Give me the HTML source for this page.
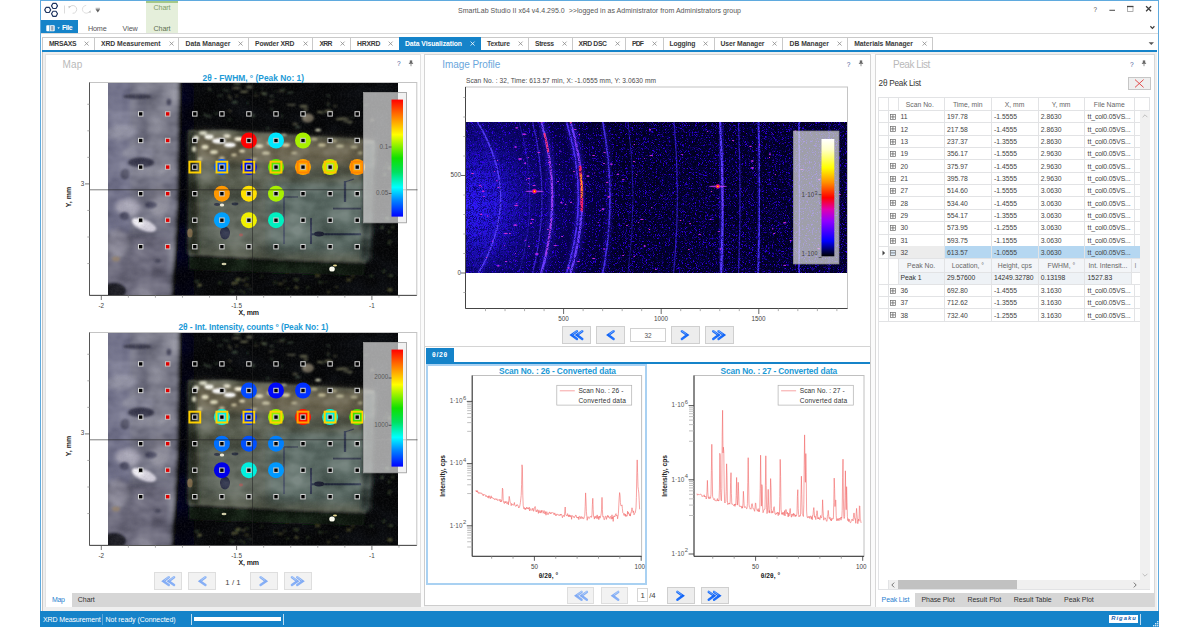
<!DOCTYPE html>
<html lang="en"><head><meta charset="utf-8"><title>SmartLab Studio II - Data Visualization</title>
<style>
html,body{margin:0;padding:0;background:#fff;}
body{width:1200px;height:627px;position:relative;overflow:hidden;font-family:"Liberation Sans",sans-serif;}
body div,body svg,.t{position:absolute;}
.t{white-space:pre;line-height:1;}
svg{overflow:visible;}
</style></head>
<body>
<svg width="0" height="0" style="left:0;top:0"><defs>
<linearGradient id="gb" gradientUnits="userSpaceOnUse" x1="0" y1="2" x2="0" y2="15"><stop offset="0" stop-color="#3a86ff"/><stop offset="0.5" stop-color="#0f62f5"/><stop offset="1" stop-color="#2c7bff"/></linearGradient>
<linearGradient id="jet" x1="0" y1="0" x2="0" y2="1">
<stop offset="0" stop-color="#ff0000"/><stop offset="0.12" stop-color="#ff6a00"/><stop offset="0.3" stop-color="#ffff00"/><stop offset="0.5" stop-color="#10e000"/><stop offset="0.62" stop-color="#00e060"/><stop offset="0.75" stop-color="#00ffff"/><stop offset="0.85" stop-color="#0090ff"/><stop offset="1" stop-color="#0000ff"/></linearGradient>
<linearGradient id="hot" x1="0" y1="0" x2="0" y2="1">
<stop offset="0" stop-color="#ffffff"/><stop offset="0.09" stop-color="#ffffc8"/><stop offset="0.245" stop-color="#ffff00"/><stop offset="0.37" stop-color="#ff9000"/><stop offset="0.5" stop-color="#ff0000"/><stop offset="0.6" stop-color="#e000b0"/><stop offset="0.7" stop-color="#9000ff"/><stop offset="0.87" stop-color="#0000ff"/><stop offset="0.95" stop-color="#000060"/><stop offset="1" stop-color="#000000"/></linearGradient>
<filter id="b1" x="-20%" y="-20%" width="140%" height="140%"><feGaussianBlur stdDeviation="1"/></filter>
<filter id="b2" x="-20%" y="-20%" width="140%" height="140%"><feGaussianBlur stdDeviation="2.2"/></filter>
<filter id="b4" x="-30%" y="-30%" width="160%" height="160%"><feGaussianBlur stdDeviation="4"/></filter>
<filter id="b05" x="-20%" y="-20%" width="140%" height="140%"><feGaussianBlur stdDeviation="0.6"/></filter>
<filter id="grain" x="0" y="0" width="100%" height="100%" color-interpolation-filters="sRGB"><feTurbulence type="fractalNoise" baseFrequency="0.55" numOctaves="2" seed="4"/><feColorMatrix values="0 0 0 0 0.5  0 0 0 0 0.5  0 0 0 0 0.5  1.2 0 0 0 -0.45"/></filter>
<filter id="mottle" x="0" y="0" width="100%" height="100%" color-interpolation-filters="sRGB"><feTurbulence type="fractalNoise" baseFrequency="0.035 0.05" numOctaves="3" seed="17"/><feColorMatrix values="1.5 0 0 0 -0.25  1.5 0 0 0 -0.25  1.5 0 0 0 -0.25  0 0 0 0 1"/></filter>
<filter id="grainw" x="0" y="0" width="100%" height="100%"><feTurbulence type="fractalNoise" baseFrequency="0.5" numOctaves="2" seed="9"/><feColorMatrix values="0 0 0 0 1  0 0 0 0 1  0 0 0 0 1  0.9 0 0 0 -0.42"/></filter>
<filter id="bnoise" x="0" y="0" width="100%" height="100%"><feTurbulence type="fractalNoise" baseFrequency="1.7" numOctaves="1" seed="11"/><feColorMatrix values="0 0 0 0 0.04  0 0 0 0 0  0 0 0 0 1  0 7 0 0 -3.82"/></filter>
<filter id="knoise" x="0" y="0" width="100%" height="100%"><feTurbulence type="fractalNoise" baseFrequency="1.9" numOctaves="1" seed="23"/><feColorMatrix values="0 0 0 0 0  0 0 0 0 0  0 0 0 0 0.08  7 0 0 0 -3.6"/></filter>

<clipPath id="pc"><rect x="0" y="0" width="290" height="212"/></clipPath>
<g id="photo" clip-path="url(#pc)">
<rect x="0" y="0" width="290" height="212" fill="#050608"/>
<g filter="url(#b2)">
<path d="M-8 -8 L71.5 -8 L70.5 110 L63.5 220 L-8 220 Z" fill="#787889"/>
<rect x="-8" y="-8" width="30" height="228" fill="#71718a"/>
<rect x="40" y="-8" width="30" height="100" fill="#80808f"/>
<rect x="-8" y="150" width="71" height="70" fill="#6c6b7c"/>
<ellipse cx="14" cy="50" rx="16" ry="7" fill="#9090a2"/>
<ellipse cx="30" cy="70" rx="16" ry="6" fill="#8a8a9c"/>
<ellipse cx="20" cy="124" rx="12" ry="8" fill="#9c9aac"/>
<ellipse cx="10" cy="160" rx="10" ry="14" fill="#8a8898"/>
<ellipse cx="52" cy="118" rx="10" ry="16" fill="#8b8a98"/>
</g>
<g filter="url(#b1)">
<ellipse cx="36" cy="142" rx="13" ry="5.5" fill="#d6d3de" transform="rotate(22 36 142)"/>
<ellipse cx="30" cy="139" rx="6" ry="3.4" fill="#f2f0f6" transform="rotate(22 30 139)"/>
<ellipse cx="29" cy="13.5" rx="14" ry="2.6" fill="#3c3c50"/>
<ellipse cx="33" cy="79.5" rx="13" ry="5" fill="#353548"/>
<ellipse cx="17" cy="91" rx="4.5" ry="5.5" fill="#47475c"/>
<ellipse cx="61" cy="19" rx="2.2" ry="3.6" fill="#45455a"/>
<ellipse cx="16.5" cy="133" rx="5" ry="4" fill="#484860"/>
<ellipse cx="43" cy="122" rx="6" ry="3.4" fill="#4c4c62"/>
<ellipse cx="6" cy="208" rx="12" ry="8" fill="#20202c"/>
<ellipse cx="50" cy="178" rx="3" ry="2" fill="#505064"/>
<ellipse cx="8" cy="176" rx="4" ry="2.4" fill="#8a7868"/>
</g>
<path d="M73.5 -6 L86 -6 L86 218 L66 218 L72.5 110 Z" fill="#040507" filter="url(#b1)"/>
<g filter="url(#b1)">
<path d="M81 48 L120 47 L160 50 L204 53 L254 56 L266 58 L263 120 L261 160 L258 180 L200 178 L140 175 L81 172 Z" fill="#585d50"/>
<path d="M81 173.5 L258 181 L256 193 L81 187 Z" fill="#11130e"/>
</g>
<g filter="url(#b4)">
<path d="M84 50 L262 58 L262 84 L86 78 Z" fill="#68624e"/>
<path d="M160 100 L262 100 L258 172 L160 170 Z" fill="#5b6c66"/>
<path d="M92 112 L160 112 L160 168 L92 165 Z" fill="#5f665b"/>
</g>
<g filter="url(#b2)">
<path d="M80 48 L88 48 L90 172 L80 171 Z" fill="#23251f"/>
<path d="M256 60 L267 60 L262 178 L253 178 Z" fill="#2a3430"/>
</g>
<g filter="url(#b1)">
<ellipse cx="88" cy="55" rx="3" ry="2.6" fill="#e8e8d8"/>
<ellipse cx="95" cy="50" rx="4" ry="2" fill="#d8d8c4"/>
<ellipse cx="101" cy="54" rx="4.5" ry="2.4" fill="#fafaf0"/>
<ellipse cx="111" cy="58" rx="7" ry="2.8" fill="#ffffff"/>
<ellipse cx="122" cy="62" rx="6" ry="2.4" fill="#ffffff"/>
<ellipse cx="131" cy="56" rx="4.5" ry="2.2" fill="#fbf6e2"/>
<ellipse cx="119" cy="53" rx="3.5" ry="1.8" fill="#f0ecd4"/>
<ellipse cx="141" cy="60" rx="5" ry="2.2" fill="#efe8c8"/>
<ellipse cx="97" cy="64" rx="3.5" ry="2.2" fill="#e4e0c4"/>
<ellipse cx="151" cy="63" rx="4" ry="1.8" fill="#e0d8b0"/>
<ellipse cx="164" cy="60" rx="5" ry="2" fill="#d8d2ac"/>
<ellipse cx="178" cy="62" rx="4" ry="1.8" fill="#dcd4a8"/>
<ellipse cx="194" cy="60" rx="5" ry="1.8" fill="#c8c2a0"/>
<ellipse cx="214" cy="62" rx="4" ry="1.8" fill="#c4be9a"/>
<ellipse cx="232" cy="63" rx="4" ry="1.6" fill="#bab694"/>
<ellipse cx="246" cy="64" rx="3.5" ry="1.6" fill="#b0ac8c"/>
<ellipse cx="106" cy="69" rx="4" ry="2" fill="#e0dcc0"/>
<ellipse cx="134" cy="68" rx="3" ry="1.6" fill="#ece4c4"/>
<ellipse cx="86" cy="66" rx="2.2" ry="3" fill="#c8c8b0"/>
<ellipse cx="158" cy="70" rx="4" ry="1.6" fill="#c8c2a0"/>
<ellipse cx="172" cy="56" rx="3" ry="1.4" fill="#c8c098"/>
<ellipse cx="206" cy="56" rx="3.5" ry="1.5" fill="#b8b290"/>
<ellipse cx="226" cy="58" rx="3" ry="1.4" fill="#b0aa8a"/>
<ellipse cx="114" cy="75" rx="3" ry="1.6" fill="#cfc8a8"/>
<ellipse cx="92" cy="76" rx="2.5" ry="1.8" fill="#c0bca0"/>
<ellipse cx="126" cy="72" rx="3" ry="1.4" fill="#d8d0b0"/>
<ellipse cx="146" cy="76" rx="3" ry="1.3" fill="#b8b294"/>
<ellipse cx="186" cy="70" rx="3" ry="1.3" fill="#b4ae8c"/>
<ellipse cx="252" cy="70" rx="2.5" ry="1.4" fill="#a8a484"/>
<ellipse cx="147.0" cy="9.5" rx="1.2" ry="1.1" fill="#2c3a2c"/>
<ellipse cx="154.4" cy="5.5" rx="1.5" ry="0.8" fill="#2c342c"/>
<ellipse cx="163.6" cy="13.3" rx="1.9" ry="1.4" fill="#2c342c"/>
<ellipse cx="111.8" cy="12.6" rx="3.1" ry="1.2" fill="#2c342c"/>
<ellipse cx="159.8" cy="45.0" rx="2.2" ry="0.8" fill="#2c3a2c"/>
<ellipse cx="163.8" cy="26.2" rx="1.7" ry="1.4" fill="#2c342c"/>
<ellipse cx="121.8" cy="28.0" rx="1.8" ry="1.1" fill="#3a3a2c"/>
<ellipse cx="101.1" cy="5.6" rx="2.1" ry="1.1" fill="#3a3a2c"/>
<ellipse cx="226.8" cy="23.0" rx="1.8" ry="0.9" fill="#4a4a3a"/>
<ellipse cx="121.6" cy="36.5" rx="2.3" ry="1.1" fill="#2c3a2c"/>
<ellipse cx="244.0" cy="34.4" rx="2.3" ry="0.8" fill="#263228"/>
<ellipse cx="180.1" cy="10.1" rx="1.3" ry="1.1" fill="#263228"/>
<ellipse cx="96.9" cy="31.7" rx="2.3" ry="1.4" fill="#2c342c"/>
<ellipse cx="145.2" cy="32.9" rx="2.1" ry="1.3" fill="#2c342c"/>
<ellipse cx="102.1" cy="7.0" rx="2.0" ry="1.2" fill="#263228"/>
<ellipse cx="100.7" cy="33.2" rx="3.2" ry="1.4" fill="#2c342c"/>
<ellipse cx="140.1" cy="19.6" rx="1.0" ry="1.1" fill="#263228"/>
<ellipse cx="119.6" cy="8.0" rx="1.5" ry="0.9" fill="#2c3a2c"/>
<ellipse cx="220.0" cy="20.1" rx="1.2" ry="1.1" fill="#4a4a3a"/>
<ellipse cx="186.7" cy="41.0" rx="2.9" ry="0.9" fill="#4a4a3a"/>
<ellipse cx="163.1" cy="18.4" rx="3.1" ry="0.8" fill="#4a4a3a"/>
<ellipse cx="121.0" cy="13.0" rx="1.0" ry="1.4" fill="#3a3a2c"/>
<ellipse cx="122.1" cy="15.1" rx="1.9" ry="1.0" fill="#3a3a2c"/>
<ellipse cx="189.7" cy="44.0" rx="3.1" ry="1.2" fill="#2c342c"/>
<ellipse cx="220.2" cy="22.6" rx="1.9" ry="1.0" fill="#2c342c"/>
<ellipse cx="108.2" cy="30.3" rx="1.4" ry="1.5" fill="#2c3a2c"/>
<ellipse cx="167.6" cy="7.7" rx="1.1" ry="0.7" fill="#2c342c"/>
<ellipse cx="116.6" cy="7.4" rx="2.4" ry="0.8" fill="#263228"/>
<ellipse cx="126.6" cy="19.2" rx="3.1" ry="1.2" fill="#263228"/>
<ellipse cx="173.5" cy="8.0" rx="3.2" ry="1.1" fill="#4a4a3a"/>
<ellipse cx="175.2" cy="6.7" rx="2.6" ry="1.3" fill="#2c3a2c"/>
<ellipse cx="174.2" cy="32.8" rx="1.1" ry="1.5" fill="#2c342c"/>
<ellipse cx="183.0" cy="9.3" rx="3.0" ry="1.3" fill="#2c342c"/>
<ellipse cx="142.5" cy="30.6" rx="2.5" ry="0.9" fill="#2c3a2c"/>
<ellipse cx="154.5" cy="10.2" rx="2.2" ry="1.3" fill="#3a3a2c"/>
<ellipse cx="148.0" cy="12.6" rx="2.8" ry="1.4" fill="#3a3a2c"/>
<ellipse cx="220.2" cy="12.7" rx="2.1" ry="1.3" fill="#2c342c"/>
<ellipse cx="264.2" cy="37.0" rx="1.6" ry="1.3" fill="#4a4a3a"/>
<ellipse cx="258.3" cy="22.2" rx="3.1" ry="1.0" fill="#263228"/>
<ellipse cx="128.8" cy="12.8" rx="1.7" ry="1.1" fill="#3a3a2c"/>
<ellipse cx="242.3" cy="38.9" rx="2.0" ry="1.5" fill="#4a5240"/>
<ellipse cx="220.4" cy="27.9" rx="4.0" ry="1.5" fill="#66664e"/>
<ellipse cx="214.5" cy="29.3" rx="2.5" ry="1.4" fill="#4a5240"/>
<ellipse cx="136.2" cy="8.7" rx="4.2" ry="1.2" fill="#66664e"/>
<ellipse cx="237.7" cy="38.4" rx="2.5" ry="0.9" fill="#5a5a48"/>
<ellipse cx="195.7" cy="23.3" rx="4.0" ry="1.3" fill="#66664e"/>
<ellipse cx="241.7" cy="39.1" rx="3.1" ry="1.2" fill="#5a5a48"/>
<ellipse cx="128.5" cy="5.2" rx="4.2" ry="0.9" fill="#66664e"/>
<ellipse cx="236.2" cy="35.6" rx="4.6" ry="1.5" fill="#5a5a48"/>
<ellipse cx="129.3" cy="0.7" rx="3.5" ry="1.4" fill="#4a5240"/>
<ellipse cx="156.6" cy="10.8" rx="2.4" ry="1.5" fill="#4a5240"/>
<ellipse cx="231.9" cy="36.1" rx="4.4" ry="1.2" fill="#66664e"/>
<ellipse cx="141.4" cy="4.0" rx="3.5" ry="1.5" fill="#5a5a48"/>
<ellipse cx="197.8" cy="26.5" rx="2.4" ry="0.9" fill="#66664e"/>
<ellipse cx="211.6" cy="29.0" rx="3.0" ry="1.2" fill="#66664e"/>
<ellipse cx="182.9" cy="21.9" rx="4.6" ry="0.8" fill="#5a5a48"/>
<ellipse cx="200" cy="35" rx="6" ry="4.5" fill="#777060"/>
<ellipse cx="210" cy="47" rx="3" ry="1.6" fill="#d8d8c0"/>
<ellipse cx="176" cy="52" rx="3" ry="1.3" fill="#b8b8a0"/>
<ellipse cx="142.3" cy="205.9" rx="1.9" ry="0.6" fill="#283020"/>
<ellipse cx="263.2" cy="193.1" rx="2.2" ry="1.0" fill="#2a3824"/>
<ellipse cx="188.4" cy="204.5" rx="2.0" ry="1.2" fill="#5a5a34"/>
<ellipse cx="187.5" cy="196.5" rx="2.8" ry="1.4" fill="#283020"/>
<ellipse cx="138.9" cy="202.1" rx="2.7" ry="0.7" fill="#444424"/>
<ellipse cx="111.8" cy="200.0" rx="2.3" ry="0.9" fill="#344428"/>
<ellipse cx="129.7" cy="197.5" rx="2.8" ry="0.7" fill="#344428"/>
<ellipse cx="228.4" cy="203.9" rx="1.5" ry="0.7" fill="#444424"/>
<ellipse cx="179.7" cy="205.4" rx="1.8" ry="1.0" fill="#344428"/>
<ellipse cx="282.0" cy="207.0" rx="2.4" ry="1.4" fill="#444424"/>
<ellipse cx="167.1" cy="199.6" rx="1.6" ry="1.2" fill="#2a3824"/>
<ellipse cx="91.8" cy="202.0" rx="2.4" ry="0.9" fill="#5a5a34"/>
<ellipse cx="189.4" cy="197.3" rx="1.2" ry="1.3" fill="#344428"/>
<ellipse cx="132.8" cy="207.8" rx="1.5" ry="0.6" fill="#344428"/>
<ellipse cx="240.7" cy="196.9" rx="2.6" ry="1.3" fill="#444424"/>
<ellipse cx="220.5" cy="209.0" rx="1.3" ry="1.3" fill="#5a5a34"/>
<ellipse cx="199.8" cy="204.6" rx="1.6" ry="1.2" fill="#344428"/>
<ellipse cx="123.9" cy="208.1" rx="2.9" ry="1.1" fill="#2a3824"/>
<ellipse cx="245.1" cy="193.5" rx="1.1" ry="1.3" fill="#444424"/>
<ellipse cx="176.9" cy="198.1" rx="1.8" ry="1.3" fill="#283020"/>
<ellipse cx="209.9" cy="192.8" rx="2.9" ry="1.4" fill="#444424"/>
<ellipse cx="139.3" cy="195.3" rx="2.3" ry="1.0" fill="#2a3824"/>
<ellipse cx="128.4" cy="200.0" rx="1.5" ry="1.2" fill="#444424"/>
<ellipse cx="282.9" cy="192.7" rx="2.5" ry="1.0" fill="#344428"/>
<ellipse cx="125.1" cy="200.5" rx="1.2" ry="1.3" fill="#5a5a34"/>
<ellipse cx="172.7" cy="200.9" rx="2.9" ry="0.8" fill="#5a5a34"/>
<ellipse cx="130.2" cy="196.1" rx="2.7" ry="1.2" fill="#444424"/>
<ellipse cx="212.7" cy="199.3" rx="3.0" ry="1.3" fill="#2a3824"/>
<ellipse cx="90.8" cy="203.3" rx="1.9" ry="0.6" fill="#2a3824"/>
<ellipse cx="218.4" cy="198.9" rx="2.3" ry="0.8" fill="#283020"/>
<ellipse cx="135.5" cy="197.3" rx="1.4" ry="0.8" fill="#5a5a34"/>
<ellipse cx="88.7" cy="198.6" rx="2.9" ry="1.0" fill="#2a3824"/>
<ellipse cx="135.9" cy="209.4" rx="1.4" ry="0.7" fill="#2a3824"/>
<ellipse cx="153.7" cy="193.5" rx="2.0" ry="0.8" fill="#2a3824"/>
<ellipse cx="279.1" cy="80.5" rx="1.1" ry="0.9" fill="#2a3424"/>
<ellipse cx="277.2" cy="84.6" rx="0.8" ry="1.2" fill="#2a3424"/>
<ellipse cx="274.2" cy="144.4" rx="1.4" ry="1.7" fill="#2a3424"/>
<ellipse cx="281.8" cy="158.8" rx="1.9" ry="1.3" fill="#2a3424"/>
<ellipse cx="275.9" cy="188.3" rx="1.0" ry="1.7" fill="#2a3424"/>
<ellipse cx="281.6" cy="84.8" rx="1.8" ry="1.9" fill="#2a3424"/>
<ellipse cx="281.3" cy="160.7" rx="1.8" ry="1.0" fill="#2a3424"/>
<ellipse cx="279.4" cy="135.5" rx="1.8" ry="1.8" fill="#2a3424"/>
<ellipse cx="284.9" cy="144.2" rx="1.9" ry="1.6" fill="#2a3424"/>
<ellipse cx="282.5" cy="105.3" rx="0.8" ry="1.0" fill="#2a3424"/>
<ellipse cx="276.5" cy="91.5" rx="1.8" ry="1.5" fill="#2a3424"/>
<ellipse cx="281.3" cy="148.9" rx="1.6" ry="1.4" fill="#2a3424"/>
</g>
<g filter="url(#b05)">
<ellipse cx="224" cy="186" rx="2.8" ry="2.6" fill="#fffff2"/>
<ellipse cx="227" cy="182.6" rx="2" ry="1" fill="#e8d890"/>
<ellipse cx="114" cy="122" rx="2.2" ry="1.6" fill="#f0ecd8"/>
<ellipse cx="116" cy="181" rx="2.5" ry="1.3" fill="#d8d4b0"/>
<ellipse cx="82" cy="150" rx="2.6" ry="4.5" fill="#6a5638"/>
<path d="M176 114 v47" stroke="#39405a" stroke-width="1.4" fill="none"/>
<path d="M176 114 h14" stroke="#353a4c" stroke-width="1.2" fill="none"/>
<path d="M203 135 v26" stroke="#333a52" stroke-width="1.9" fill="none"/>
<path d="M203 151.2 h50" stroke="#2a3046" stroke-width="1.9" fill="none"/>
<ellipse cx="211" cy="151" rx="5" ry="2.4" fill="#20263a"/>
<path d="M225 125.6 h28" stroke="#30374a" stroke-width="1.8" fill="none"/>
<path d="M237 98 v21" stroke="#2c3246" stroke-width="2.3" fill="none"/>
<path d="M237 99 l9 -3" stroke="#2c3246" stroke-width="1.2" fill="none"/>
<ellipse cx="117" cy="150" rx="5" ry="6.5" fill="#22253a"/>
<ellipse cx="109" cy="121.5" rx="3" ry="1.4" fill="#2c3040"/>
<ellipse cx="127" cy="121" rx="3.4" ry="1.4" fill="#2c3040"/>
<ellipse cx="133" cy="152" rx="2" ry="1.4" fill="#b84040" opacity="0.6"/>
</g>
<rect x="0" y="0" width="290" height="212" filter="url(#mottle)" opacity="0.5" style="mix-blend-mode:soft-light"/>
<rect x="0" y="0" width="290" height="212" filter="url(#grain)" opacity="0.2"/>
</g>
</defs></svg>
<div class="window-chrome" style="left:0;top:0">
<div style="left:40px;top:0px;width:1119px;height:627px;box-sizing:border-box;border-left:1px solid #5faade;border-right:1px solid #5faade;border-top:1px solid #5faade;"></div>
<svg style="left:41px;top:1px" width="64" height="19" viewBox="0 0 64 19"><g fill="none" stroke="#1f3560" stroke-width="1.15" stroke-linejoin="round"><polygon points="9.70,8.90 8.20,11.50 5.20,11.50 3.70,8.90 5.20,6.30 8.20,6.30"/><polygon points="16.50,4.90 15.00,7.50 12.00,7.50 10.50,4.90 12.00,2.30 15.00,2.30"/><polygon points="16.50,12.80 15.00,15.40 12.00,15.40 10.50,12.80 12.00,10.20 15.00,10.20"/></g><path d="M23.5 4.5V12.5" stroke="#dcdcdc" stroke-width="1" fill="none"/><path d="M28.6 6.2 A3.9 3.9 0 1 1 31.6 12.3" stroke="#cfcfcf" stroke-width="0.8" fill="none"/><path d="M27.4 4.9l2.6 0.4l-2.2 2.2z" fill="#c4c4c4"/><path d="M45.2 4.4 A3.9 3.9 0 1 0 48.6 10.4" stroke="#d6d6d6" stroke-width="0.8" fill="none"/><path d="M49.6 9.2l0.2 2.6l-2.6 -0.4z" fill="#c4c4c4"/><path d="M54.5 8.3h4.6l-2.3 3.1z" fill="#606060"/><path d="M54.6 7.3h4.4" stroke="#8a8a8a" stroke-width="0.7"/></svg>
<div style="left:146px;top:1px;width:32px;height:32px;background:#e5efdb;"></div>
<div style="left:146px;top:1px;width:32px;height:2px;background:#a4c98a;"></div>
<span class="t" style="font-size:7.2px;color:#7f9d68;letter-spacing:-0.195px;left:153.60px;top:4.41px;">Chart</span>
<span class="t" style="font-size:7.2px;color:#5f6f52;letter-spacing:-0.195px;left:153.60px;top:24.61px;">Chart</span>
<div style="left:41px;top:20.4px;width:37px;height:12.8px;background:#1583c9;"></div>
<svg style="left:46px;top:24.9px" width="16" height="8" viewBox="0 0 16 8">
<rect x="0.3" y="0.3" width="8.4" height="5.9" rx="0.7" fill="#fff"/><path d="M3.7 0.3v5.9" stroke="#1583c9" stroke-width="0.7"/><rect x="4.9" y="1" width="2.7" height="4.5" fill="#a9b9c9"/><path d="M6.2 1v4.5" stroke="#6f8194" stroke-width="0.5"/>
<path d="M11.4 2.3h2.4l-1.2 1.6z" fill="#d6eaf8"/></svg>
<span class="t" style="font-size:6.9px;color:#fff;font-weight:700;letter-spacing:-0.425px;left:61.90px;top:24.86px;">File</span>
<span class="t" style="font-size:7.2px;color:#555;letter-spacing:-0.163px;left:88.00px;top:24.61px;">Home</span>
<span class="t" style="font-size:7.2px;color:#555;letter-spacing:-0.084px;left:122.60px;top:24.61px;">View</span>
<span class="t" style="font-size:7px;color:#555;letter-spacing:0.028px;left:458.00px;top:7.07px;">SmartLab Studio II x64 v4.4.295.0  &gt;&gt;logged in as Administrator from Administrators group</span>
<svg style="left:1088px;top:2px" width="70" height="46" viewBox="0 0 70 46">
<path d="M21.4 8.3h5.6" stroke="#555" stroke-width="1.1"/>
<rect x="39.4" y="4.6" width="5.6" height="5" fill="none" stroke="#8c8c8c" stroke-width="0.7"/><path d="M39 4.5h6.4" stroke="#444" stroke-width="1.3"/>
<path d="M58.1 4.3l5 5M63.1 4.3l-5 5" stroke="#3c3c3c" stroke-width="1.25"/>
<path d="M62.4 24.3l2 2.1l2-2.1" stroke="#3c3c3c" stroke-width="1.25" fill="none"/>
<path d="M60.6 40.2h5.4l-2.7 2.9z" fill="#555"/>
</svg>
<span class="t" style="font-size:6.3px;color:#505050;left:1093.60px;top:6.67px;">?</span>
<div style="left:41px;top:33px;width:1117px;height:1px;background:#dadada;"></div>
<div style="left:42px;top:37px;width:1px;height:13px;background:#c9c9c9;"></div>
<div style="left:42px;top:37px;width:891px;height:1px;background:#c9c9c9;"></div>
<span class="t" style="font-size:6.8px;color:#3a3a3a;font-weight:700;letter-spacing:-0.319px;left:49.00px;top:40.84px;">MRSAXS</span>
<svg style="left:84.4px;top:41.4px" width="5.2" height="5.2" viewBox="0 0 5.2 5.2"><path d="M0.6 0.6l4 4M4.6 0.6l-4 4" stroke="#8a8a8a" stroke-width="0.8"/></svg>
<div style="left:94px;top:37px;width:1px;height:13px;background:#c9c9c9;"></div>
<span class="t" style="font-size:6.8px;color:#3a3a3a;font-weight:700;letter-spacing:-0.040px;left:101.00px;top:40.84px;">XRD Measurement</span>
<svg style="left:168.9px;top:41.4px" width="5.2" height="5.2" viewBox="0 0 5.2 5.2"><path d="M0.6 0.6l4 4M4.6 0.6l-4 4" stroke="#8a8a8a" stroke-width="0.8"/></svg>
<div style="left:178px;top:37px;width:1px;height:13px;background:#c9c9c9;"></div>
<span class="t" style="font-size:6.8px;color:#3a3a3a;font-weight:700;letter-spacing:0.038px;left:185.50px;top:40.84px;">Data Manager</span>
<svg style="left:238.4px;top:41.4px" width="5.2" height="5.2" viewBox="0 0 5.2 5.2"><path d="M0.6 0.6l4 4M4.6 0.6l-4 4" stroke="#8a8a8a" stroke-width="0.8"/></svg>
<div style="left:248px;top:37px;width:1px;height:13px;background:#c9c9c9;"></div>
<span class="t" style="font-size:6.8px;color:#3a3a3a;font-weight:700;letter-spacing:-0.144px;left:255.00px;top:40.84px;">Powder XRD</span>
<svg style="left:302.9px;top:41.4px" width="5.2" height="5.2" viewBox="0 0 5.2 5.2"><path d="M0.6 0.6l4 4M4.6 0.6l-4 4" stroke="#8a8a8a" stroke-width="0.8"/></svg>
<div style="left:312px;top:37px;width:1px;height:13px;background:#c9c9c9;"></div>
<span class="t" style="font-size:6.8px;color:#3a3a3a;font-weight:700;letter-spacing:-0.680px;left:319.50px;top:40.84px;">XRR</span>
<svg style="left:340.4px;top:41.4px" width="5.2" height="5.2" viewBox="0 0 5.2 5.2"><path d="M0.6 0.6l4 4M4.6 0.6l-4 4" stroke="#8a8a8a" stroke-width="0.8"/></svg>
<div style="left:350px;top:37px;width:1px;height:13px;background:#c9c9c9;"></div>
<span class="t" style="font-size:6.8px;color:#3a3a3a;font-weight:700;letter-spacing:-0.168px;left:357.00px;top:40.84px;">HRXRD</span>
<svg style="left:388.4px;top:41.4px" width="5.2" height="5.2" viewBox="0 0 5.2 5.2"><path d="M0.6 0.6l4 4M4.6 0.6l-4 4" stroke="#8a8a8a" stroke-width="0.8"/></svg>
<div style="left:399px;top:37px;width:82px;height:14px;background:#1583c9;"></div>
<span class="t" style="font-size:6.8px;color:#fff;font-weight:700;letter-spacing:-0.062px;left:405.00px;top:40.84px;">Data Visualization</span>
<svg style="left:470.4px;top:41.4px" width="5.2" height="5.2" viewBox="0 0 5.2 5.2"><path d="M0.6 0.6l4 4M4.6 0.6l-4 4" stroke="#fff" stroke-width="0.8"/></svg>
<span class="t" style="font-size:6.8px;color:#3a3a3a;font-weight:700;letter-spacing:-0.177px;left:487.00px;top:40.84px;">Texture</span>
<svg style="left:518.4px;top:41.4px" width="5.2" height="5.2" viewBox="0 0 5.2 5.2"><path d="M0.6 0.6l4 4M4.6 0.6l-4 4" stroke="#8a8a8a" stroke-width="0.8"/></svg>
<div style="left:528px;top:37px;width:1px;height:13px;background:#c9c9c9;"></div>
<span class="t" style="font-size:6.8px;color:#3a3a3a;font-weight:700;letter-spacing:-0.359px;left:535.00px;top:40.84px;">Stress</span>
<svg style="left:561.9px;top:41.4px" width="5.2" height="5.2" viewBox="0 0 5.2 5.2"><path d="M0.6 0.6l4 4M4.6 0.6l-4 4" stroke="#8a8a8a" stroke-width="0.8"/></svg>
<div style="left:572px;top:37px;width:1px;height:13px;background:#c9c9c9;"></div>
<span class="t" style="font-size:6.8px;color:#3a3a3a;font-weight:700;letter-spacing:-0.349px;left:578.50px;top:40.84px;">XRD DSC</span>
<svg style="left:614.9px;top:41.4px" width="5.2" height="5.2" viewBox="0 0 5.2 5.2"><path d="M0.6 0.6l4 4M4.6 0.6l-4 4" stroke="#8a8a8a" stroke-width="0.8"/></svg>
<div style="left:625px;top:37px;width:1px;height:13px;background:#c9c9c9;"></div>
<span class="t" style="font-size:6.8px;color:#3a3a3a;font-weight:700;letter-spacing:-0.805px;left:632.00px;top:40.84px;">PDF</span>
<svg style="left:652.4px;top:41.4px" width="5.2" height="5.2" viewBox="0 0 5.2 5.2"><path d="M0.6 0.6l4 4M4.6 0.6l-4 4" stroke="#8a8a8a" stroke-width="0.8"/></svg>
<div style="left:663px;top:37px;width:1px;height:13px;background:#c9c9c9;"></div>
<span class="t" style="font-size:6.8px;color:#3a3a3a;font-weight:700;letter-spacing:-0.135px;left:669.50px;top:40.84px;">Logging</span>
<svg style="left:703.4px;top:41.4px" width="5.2" height="5.2" viewBox="0 0 5.2 5.2"><path d="M0.6 0.6l4 4M4.6 0.6l-4 4" stroke="#8a8a8a" stroke-width="0.8"/></svg>
<div style="left:714px;top:37px;width:1px;height:13px;background:#c9c9c9;"></div>
<span class="t" style="font-size:6.8px;color:#3a3a3a;font-weight:700;letter-spacing:-0.087px;left:720.50px;top:40.84px;">User Manager</span>
<svg style="left:772.4px;top:41.4px" width="5.2" height="5.2" viewBox="0 0 5.2 5.2"><path d="M0.6 0.6l4 4M4.6 0.6l-4 4" stroke="#8a8a8a" stroke-width="0.8"/></svg>
<div style="left:782px;top:37px;width:1px;height:13px;background:#c9c9c9;"></div>
<span class="t" style="font-size:6.8px;color:#3a3a3a;font-weight:700;letter-spacing:-0.017px;left:789.50px;top:40.84px;">DB Manager</span>
<svg style="left:836.9px;top:41.4px" width="5.2" height="5.2" viewBox="0 0 5.2 5.2"><path d="M0.6 0.6l4 4M4.6 0.6l-4 4" stroke="#8a8a8a" stroke-width="0.8"/></svg>
<div style="left:847px;top:37px;width:1px;height:13px;background:#c9c9c9;"></div>
<span class="t" style="font-size:6.8px;color:#3a3a3a;font-weight:700;letter-spacing:-0.032px;left:854.20px;top:40.84px;">Materials Manager</span>
<svg style="left:921.7px;top:41.4px" width="5.2" height="5.2" viewBox="0 0 5.2 5.2"><path d="M0.6 0.6l4 4M4.6 0.6l-4 4" stroke="#8a8a8a" stroke-width="0.8"/></svg>
<div style="left:932px;top:37px;width:1px;height:13px;background:#c9c9c9;"></div>
<div style="left:42px;top:50px;width:1115px;height:2px;background:#1583c9;"></div>
<div style="left:42px;top:52px;width:1115px;height:559px;background:#efefef;"></div>
</div>
<div class="panel panel-map" style="left:0;top:0">
<div style="left:42px;top:52px;width:1px;height:559px;background:#c4c4c4;"></div>
<div style="left:421px;top:54px;width:3px;height:553px;background:#fbfbfb;"></div>
<div style="left:45px;top:54px;width:376px;height:553px;background:#fff;border:1px solid #e2e2e2;box-sizing:border-box;border-bottom:none;"></div>
<span class="t" style="font-size:10px;color:#b9b9b9;letter-spacing:0.073px;left:62.60px;top:60.13px;">Map</span>
<span class="t" style="font-size:6.6px;color:#4a5a96;left:397.10px;top:61.31px;">?</span><svg style="left:407.9px;top:60.00000000000001px" width="6" height="7" viewBox="0 0 6 7"><path d="M1.8 0.4h2.4v2.6h-2.4z" fill="#6a6a6a"/><path d="M0.9 3.3h4.2" stroke="#555" stroke-width="0.9"/><path d="M3 3.6v2.6" stroke="#666" stroke-width="0.7"/></svg>
<svg style="left:85px;top:75px" width="340" height="250" viewBox="0 0 340 250"><rect x="4.5" y="7.50" width="327.3" height="212.50" fill="#fff" stroke="#c4c4c4" stroke-width="1"/>
<use href="#photo" x="23" y="8.00"/>
<circle cx="163.9" cy="65.5" r="8" fill="#ff0000"/>
<circle cx="191.0" cy="65.5" r="8" fill="#00e8ff"/>
<circle cx="218.0" cy="65.5" r="8" fill="#a8f000"/>
<circle cx="136.9" cy="92.1" r="8" fill="#0058ff"/>
<circle cx="163.9" cy="92.1" r="8" fill="#0010e8"/>
<circle cx="191.0" cy="92.1" r="8" fill="#58e800"/>
<circle cx="218.0" cy="92.1" r="8" fill="#ffa800"/>
<circle cx="245.1" cy="92.1" r="8" fill="#bcf000"/>
<circle cx="272.2" cy="92.1" r="8" fill="#ffa000"/>
<circle cx="136.9" cy="118.7" r="8" fill="#ff9800"/>
<circle cx="163.9" cy="118.7" r="8" fill="#ffe000"/>
<circle cx="191.0" cy="118.7" r="8" fill="#a8f000"/>
<circle cx="136.9" cy="145.2" r="8" fill="#00a0ff"/>
<circle cx="163.9" cy="145.2" r="8" fill="#f0f000"/>
<circle cx="191.0" cy="145.2" r="8" fill="#00f0c0"/>
<rect x="104.4" y="86.7" width="10.8" height="10.8" fill="none" stroke="#ffd000" stroke-width="2"/>
<rect x="131.5" y="86.7" width="10.8" height="10.8" fill="none" stroke="#ffd000" stroke-width="2"/>
<rect x="158.5" y="86.7" width="10.8" height="10.8" fill="none" stroke="#ffd000" stroke-width="2"/>
<rect x="185.6" y="86.7" width="10.8" height="10.8" fill="none" stroke="#ffc400" stroke-width="2"/>
<rect x="212.6" y="86.7" width="10.8" height="10.8" fill="none" stroke="#ff8400" stroke-width="2"/>
<rect x="239.7" y="86.7" width="10.8" height="10.8" fill="none" stroke="#ffc400" stroke-width="2"/>
<rect x="266.8" y="86.7" width="10.8" height="10.8" fill="none" stroke="#ff8400" stroke-width="2"/>
<rect x="53.5" y="36.7" width="4.4" height="4.4" fill="#000" stroke="#d4d4d4" stroke-width="1"/>
<rect x="53.5" y="63.3" width="4.4" height="4.4" fill="#000" stroke="#d4d4d4" stroke-width="1"/>
<rect x="53.5" y="89.9" width="4.4" height="4.4" fill="#000" stroke="#d4d4d4" stroke-width="1"/>
<rect x="53.5" y="116.5" width="4.4" height="4.4" fill="#000" stroke="#d4d4d4" stroke-width="1"/>
<rect x="53.5" y="143.0" width="4.4" height="4.4" fill="#000" stroke="#d4d4d4" stroke-width="1"/>
<rect x="53.5" y="169.5" width="4.4" height="4.4" fill="#000" stroke="#d4d4d4" stroke-width="1"/>
<rect x="80.5" y="36.7" width="4.4" height="4.4" fill="#e00000" stroke="#c8bcbc" stroke-width="1"/>
<rect x="80.5" y="63.3" width="4.4" height="4.4" fill="#e00000" stroke="#c8bcbc" stroke-width="1"/>
<rect x="80.5" y="89.9" width="4.4" height="4.4" fill="#e00000" stroke="#c8bcbc" stroke-width="1"/>
<rect x="80.5" y="116.5" width="4.4" height="4.4" fill="#e00000" stroke="#c8bcbc" stroke-width="1"/>
<rect x="80.5" y="143.0" width="4.4" height="4.4" fill="#e00000" stroke="#c8bcbc" stroke-width="1"/>
<rect x="80.5" y="169.5" width="4.4" height="4.4" fill="#e00000" stroke="#c8bcbc" stroke-width="1"/>
<rect x="107.6" y="36.7" width="4.4" height="4.4" fill="#000" stroke="#d4d4d4" stroke-width="1"/>
<rect x="107.6" y="63.3" width="4.4" height="4.4" fill="#000" stroke="#d4d4d4" stroke-width="1"/>
<rect x="107.6" y="89.9" width="4.4" height="4.4" fill="#000" stroke="#d4d4d4" stroke-width="1"/>
<rect x="107.6" y="116.5" width="4.4" height="4.4" fill="#000" stroke="#d4d4d4" stroke-width="1"/>
<rect x="107.6" y="143.0" width="4.4" height="4.4" fill="#000" stroke="#d4d4d4" stroke-width="1"/>
<rect x="107.6" y="169.5" width="4.4" height="4.4" fill="#000" stroke="#d4d4d4" stroke-width="1"/>
<rect x="134.7" y="36.7" width="4.4" height="4.4" fill="#000" stroke="#d4d4d4" stroke-width="1"/>
<rect x="134.7" y="63.3" width="4.4" height="4.4" fill="#000" stroke="#d4d4d4" stroke-width="1"/>
<rect x="134.7" y="89.9" width="4.4" height="4.4" fill="#000" stroke="#d4d4d4" stroke-width="1"/>
<rect x="134.7" y="116.5" width="4.4" height="4.4" fill="#000" stroke="#d4d4d4" stroke-width="1"/>
<rect x="134.7" y="143.0" width="4.4" height="4.4" fill="#000" stroke="#d4d4d4" stroke-width="1"/>
<rect x="134.7" y="169.5" width="4.4" height="4.4" fill="#000" stroke="#d4d4d4" stroke-width="1"/>
<rect x="161.7" y="36.7" width="4.4" height="4.4" fill="#000" stroke="#d4d4d4" stroke-width="1"/>
<rect x="161.7" y="63.3" width="4.4" height="4.4" fill="#000" stroke="#d4d4d4" stroke-width="1"/>
<rect x="161.7" y="89.9" width="4.4" height="4.4" fill="#000" stroke="#d4d4d4" stroke-width="1"/>
<rect x="161.7" y="116.5" width="4.4" height="4.4" fill="#000" stroke="#d4d4d4" stroke-width="1"/>
<rect x="161.7" y="143.0" width="4.4" height="4.4" fill="#000" stroke="#d4d4d4" stroke-width="1"/>
<rect x="161.7" y="169.5" width="4.4" height="4.4" fill="#000" stroke="#d4d4d4" stroke-width="1"/>
<rect x="188.8" y="36.7" width="4.4" height="4.4" fill="#000" stroke="#d4d4d4" stroke-width="1"/>
<rect x="188.8" y="63.3" width="4.4" height="4.4" fill="#000" stroke="#d4d4d4" stroke-width="1"/>
<rect x="188.8" y="89.9" width="4.4" height="4.4" fill="#000" stroke="#d4d4d4" stroke-width="1"/>
<rect x="188.8" y="116.5" width="4.4" height="4.4" fill="#000" stroke="#d4d4d4" stroke-width="1"/>
<rect x="188.8" y="143.0" width="4.4" height="4.4" fill="#000" stroke="#d4d4d4" stroke-width="1"/>
<rect x="188.8" y="169.5" width="4.4" height="4.4" fill="#000" stroke="#d4d4d4" stroke-width="1"/>
<rect x="215.8" y="36.7" width="4.4" height="4.4" fill="#000" stroke="#d4d4d4" stroke-width="1"/>
<rect x="215.8" y="63.3" width="4.4" height="4.4" fill="#000" stroke="#d4d4d4" stroke-width="1"/>
<rect x="215.8" y="89.9" width="4.4" height="4.4" fill="#000" stroke="#d4d4d4" stroke-width="1"/>
<rect x="215.8" y="116.5" width="4.4" height="4.4" fill="#000" stroke="#d4d4d4" stroke-width="1"/>
<rect x="215.8" y="143.0" width="4.4" height="4.4" fill="#000" stroke="#d4d4d4" stroke-width="1"/>
<rect x="215.8" y="169.5" width="4.4" height="4.4" fill="#000" stroke="#d4d4d4" stroke-width="1"/>
<rect x="242.9" y="36.7" width="4.4" height="4.4" fill="#000" stroke="#d4d4d4" stroke-width="1"/>
<rect x="242.9" y="63.3" width="4.4" height="4.4" fill="#000" stroke="#d4d4d4" stroke-width="1"/>
<rect x="242.9" y="89.9" width="4.4" height="4.4" fill="#000" stroke="#d4d4d4" stroke-width="1"/>
<rect x="242.9" y="116.5" width="4.4" height="4.4" fill="#000" stroke="#d4d4d4" stroke-width="1"/>
<rect x="242.9" y="143.0" width="4.4" height="4.4" fill="#000" stroke="#d4d4d4" stroke-width="1"/>
<rect x="242.9" y="169.5" width="4.4" height="4.4" fill="#000" stroke="#d4d4d4" stroke-width="1"/>
<rect x="270.0" y="36.7" width="4.4" height="4.4" fill="#000" stroke="#d4d4d4" stroke-width="1"/>
<rect x="270.0" y="63.3" width="4.4" height="4.4" fill="#000" stroke="#d4d4d4" stroke-width="1"/>
<rect x="270.0" y="89.9" width="4.4" height="4.4" fill="#000" stroke="#d4d4d4" stroke-width="1"/>
<rect x="270.0" y="116.5" width="4.4" height="4.4" fill="#000" stroke="#d4d4d4" stroke-width="1"/>
<rect x="270.0" y="143.0" width="4.4" height="4.4" fill="#000" stroke="#d4d4d4" stroke-width="1"/>
<rect x="270.0" y="169.5" width="4.4" height="4.4" fill="#000" stroke="#d4d4d4" stroke-width="1"/>
<path d="M4 114.8H332.5" stroke="#222" stroke-width="0.7" opacity="0.85"/>
<path d="M167.6 8.0V220.0" stroke="#222" stroke-width="0.7" opacity="0.85"/>
<path d="M4.5 7.50V220.50H331.8" stroke="#555" stroke-width="1" fill="none"/>
<path d="M16.30 220.50v4.5" stroke="#555" stroke-width="0.8"/>
<path d="M43.36 220.50v2.2" stroke="#999" stroke-width="0.8"/>
<path d="M70.42 220.50v2.2" stroke="#999" stroke-width="0.8"/>
<path d="M97.48 220.50v2.2" stroke="#999" stroke-width="0.8"/>
<path d="M124.54 220.50v2.2" stroke="#999" stroke-width="0.8"/>
<path d="M151.60 220.50v4.5" stroke="#555" stroke-width="0.8"/>
<path d="M178.66 220.50v2.2" stroke="#999" stroke-width="0.8"/>
<path d="M205.72 220.50v2.2" stroke="#999" stroke-width="0.8"/>
<path d="M232.78 220.50v2.2" stroke="#999" stroke-width="0.8"/>
<path d="M259.84 220.50v2.2" stroke="#999" stroke-width="0.8"/>
<path d="M286.90 220.50v4.5" stroke="#555" stroke-width="0.8"/>
<path d="M313.96 220.50v2.2" stroke="#999" stroke-width="0.8"/>
<path d="M4.5 29.25h-2.2" stroke="#999" stroke-width="0.8"/>
<path d="M4.5 55.80h-2.2" stroke="#999" stroke-width="0.8"/>
<path d="M4.5 82.35h-2.2" stroke="#999" stroke-width="0.8"/>
<path d="M4.5 108.90h-4.5" stroke="#555" stroke-width="0.8"/>
<path d="M4.5 135.45h-2.2" stroke="#999" stroke-width="0.8"/>
<path d="M4.5 162.00h-2.2" stroke="#999" stroke-width="0.8"/>
<path d="M4.5 188.55h-2.2" stroke="#999" stroke-width="0.8"/>
<rect x="278.5" y="17.50" width="43.0" height="130.30" fill="rgba(235,235,235,0.68)" stroke="#9a9a9a" stroke-width="0.8"/>
<rect x="306.5" y="24.60" width="11.5" height="117.00" fill="url(#jet)"/>
<path d="M303.6 72.00h2.9" stroke="#444" stroke-width="0.8"/>
<path d="M303.6 118.50h2.9" stroke="#444" stroke-width="0.8"/></svg>
<span class="t" style="font-size:6.3px;color:#5a5a5a;left:379.43px;top:143.97px;">0.1</span>
<span class="t" style="font-size:6.3px;color:#5a5a5a;left:375.93px;top:190.47px;">0.05</span>
<span class="t" style="font-size:8.4px;color:#1c9ad6;font-weight:700;left:202.55px;top:73.69px;">2θ - FWHM, ° (Peak No: 1)</span>
<span class="t" style="font-size:6.3px;color:#444;left:98.40px;top:303.27px;">-2</span>
<span class="t" style="font-size:6.3px;color:#444;left:231.17px;top:303.27px;">-1.5</span>
<span class="t" style="font-size:6.3px;color:#444;left:369.10px;top:303.27px;">-1</span>
<span class="t" style="font-size:7px;color:#222;font-weight:700;letter-spacing:-0.104px;left:238.50px;top:309.27px;">X, mm</span>
<span class="t" style="font-size:6.3px;color:#444;left:80.68px;top:180.87px;">3</span>
<span class="t" style="font-size:7px;color:#222;font-weight:700;letter-spacing:0.041px;left:67.80px;top:196.60px;transform:translate(-50%,-50%) rotate(-90deg);">Y, mm</span>
<svg style="left:85px;top:324.5px" width="340" height="250" viewBox="0 0 340 250"><rect x="4.5" y="7.50" width="327.3" height="212.50" fill="#fff" stroke="#c4c4c4" stroke-width="1"/>
<use href="#photo" x="23" y="8.00"/>
<circle cx="163.9" cy="65.5" r="8" fill="#0048ff"/>
<circle cx="191.0" cy="65.5" r="8" fill="#0008f8"/>
<circle cx="218.0" cy="65.5" r="8" fill="#0030ff"/>
<circle cx="136.9" cy="92.1" r="8" fill="#00f0e0"/>
<circle cx="163.9" cy="92.1" r="8" fill="#0030ff"/>
<circle cx="191.0" cy="92.1" r="8" fill="#90f000"/>
<circle cx="218.0" cy="92.1" r="8" fill="#ff1000"/>
<circle cx="245.1" cy="92.1" r="8" fill="#00f0d8"/>
<circle cx="272.2" cy="92.1" r="8" fill="#40e000"/>
<circle cx="136.9" cy="118.7" r="8" fill="#0070ff"/>
<circle cx="163.9" cy="118.7" r="8" fill="#0050ff"/>
<circle cx="191.0" cy="118.7" r="8" fill="#0080ff"/>
<circle cx="136.9" cy="145.2" r="8" fill="#0000e8"/>
<circle cx="163.9" cy="145.2" r="8" fill="#00f0e0"/>
<circle cx="191.0" cy="145.2" r="8" fill="#0098ff"/>
<rect x="104.4" y="86.7" width="10.8" height="10.8" fill="none" stroke="#ffd000" stroke-width="2"/>
<rect x="131.5" y="86.7" width="10.8" height="10.8" fill="none" stroke="#ffd000" stroke-width="2"/>
<rect x="158.5" y="86.7" width="10.8" height="10.8" fill="none" stroke="#ffd000" stroke-width="2"/>
<rect x="185.6" y="86.7" width="10.8" height="10.8" fill="none" stroke="#ffd000" stroke-width="2"/>
<rect x="212.6" y="86.7" width="10.8" height="10.8" fill="none" stroke="#ffa000" stroke-width="2"/>
<rect x="239.7" y="86.7" width="10.8" height="10.8" fill="none" stroke="#ffd000" stroke-width="2"/>
<rect x="266.8" y="86.7" width="10.8" height="10.8" fill="none" stroke="#ffd000" stroke-width="2"/>
<rect x="53.5" y="36.7" width="4.4" height="4.4" fill="#000" stroke="#d4d4d4" stroke-width="1"/>
<rect x="53.5" y="63.3" width="4.4" height="4.4" fill="#000" stroke="#d4d4d4" stroke-width="1"/>
<rect x="53.5" y="89.9" width="4.4" height="4.4" fill="#000" stroke="#d4d4d4" stroke-width="1"/>
<rect x="53.5" y="116.5" width="4.4" height="4.4" fill="#000" stroke="#d4d4d4" stroke-width="1"/>
<rect x="53.5" y="143.0" width="4.4" height="4.4" fill="#000" stroke="#d4d4d4" stroke-width="1"/>
<rect x="53.5" y="169.5" width="4.4" height="4.4" fill="#000" stroke="#d4d4d4" stroke-width="1"/>
<rect x="80.5" y="36.7" width="4.4" height="4.4" fill="#e00000" stroke="#c8bcbc" stroke-width="1"/>
<rect x="80.5" y="63.3" width="4.4" height="4.4" fill="#e00000" stroke="#c8bcbc" stroke-width="1"/>
<rect x="80.5" y="89.9" width="4.4" height="4.4" fill="#e00000" stroke="#c8bcbc" stroke-width="1"/>
<rect x="80.5" y="116.5" width="4.4" height="4.4" fill="#e00000" stroke="#c8bcbc" stroke-width="1"/>
<rect x="80.5" y="143.0" width="4.4" height="4.4" fill="#e00000" stroke="#c8bcbc" stroke-width="1"/>
<rect x="80.5" y="169.5" width="4.4" height="4.4" fill="#e00000" stroke="#c8bcbc" stroke-width="1"/>
<rect x="107.6" y="36.7" width="4.4" height="4.4" fill="#000" stroke="#d4d4d4" stroke-width="1"/>
<rect x="107.6" y="63.3" width="4.4" height="4.4" fill="#000" stroke="#d4d4d4" stroke-width="1"/>
<rect x="107.6" y="89.9" width="4.4" height="4.4" fill="#000" stroke="#d4d4d4" stroke-width="1"/>
<rect x="107.6" y="116.5" width="4.4" height="4.4" fill="#000" stroke="#d4d4d4" stroke-width="1"/>
<rect x="107.6" y="143.0" width="4.4" height="4.4" fill="#000" stroke="#d4d4d4" stroke-width="1"/>
<rect x="107.6" y="169.5" width="4.4" height="4.4" fill="#000" stroke="#d4d4d4" stroke-width="1"/>
<rect x="134.7" y="36.7" width="4.4" height="4.4" fill="#000" stroke="#d4d4d4" stroke-width="1"/>
<rect x="134.7" y="63.3" width="4.4" height="4.4" fill="#000" stroke="#d4d4d4" stroke-width="1"/>
<rect x="134.7" y="89.9" width="4.4" height="4.4" fill="#000" stroke="#d4d4d4" stroke-width="1"/>
<rect x="134.7" y="116.5" width="4.4" height="4.4" fill="#000" stroke="#d4d4d4" stroke-width="1"/>
<rect x="134.7" y="143.0" width="4.4" height="4.4" fill="#000" stroke="#d4d4d4" stroke-width="1"/>
<rect x="134.7" y="169.5" width="4.4" height="4.4" fill="#000" stroke="#d4d4d4" stroke-width="1"/>
<rect x="161.7" y="36.7" width="4.4" height="4.4" fill="#000" stroke="#d4d4d4" stroke-width="1"/>
<rect x="161.7" y="63.3" width="4.4" height="4.4" fill="#000" stroke="#d4d4d4" stroke-width="1"/>
<rect x="161.7" y="89.9" width="4.4" height="4.4" fill="#000" stroke="#d4d4d4" stroke-width="1"/>
<rect x="161.7" y="116.5" width="4.4" height="4.4" fill="#000" stroke="#d4d4d4" stroke-width="1"/>
<rect x="161.7" y="143.0" width="4.4" height="4.4" fill="#000" stroke="#d4d4d4" stroke-width="1"/>
<rect x="161.7" y="169.5" width="4.4" height="4.4" fill="#000" stroke="#d4d4d4" stroke-width="1"/>
<rect x="188.8" y="36.7" width="4.4" height="4.4" fill="#000" stroke="#d4d4d4" stroke-width="1"/>
<rect x="188.8" y="63.3" width="4.4" height="4.4" fill="#000" stroke="#d4d4d4" stroke-width="1"/>
<rect x="188.8" y="89.9" width="4.4" height="4.4" fill="#000" stroke="#d4d4d4" stroke-width="1"/>
<rect x="188.8" y="116.5" width="4.4" height="4.4" fill="#000" stroke="#d4d4d4" stroke-width="1"/>
<rect x="188.8" y="143.0" width="4.4" height="4.4" fill="#000" stroke="#d4d4d4" stroke-width="1"/>
<rect x="188.8" y="169.5" width="4.4" height="4.4" fill="#000" stroke="#d4d4d4" stroke-width="1"/>
<rect x="215.8" y="36.7" width="4.4" height="4.4" fill="#000" stroke="#d4d4d4" stroke-width="1"/>
<rect x="215.8" y="63.3" width="4.4" height="4.4" fill="#000" stroke="#d4d4d4" stroke-width="1"/>
<rect x="215.8" y="89.9" width="4.4" height="4.4" fill="#000" stroke="#d4d4d4" stroke-width="1"/>
<rect x="215.8" y="116.5" width="4.4" height="4.4" fill="#000" stroke="#d4d4d4" stroke-width="1"/>
<rect x="215.8" y="143.0" width="4.4" height="4.4" fill="#000" stroke="#d4d4d4" stroke-width="1"/>
<rect x="215.8" y="169.5" width="4.4" height="4.4" fill="#000" stroke="#d4d4d4" stroke-width="1"/>
<rect x="242.9" y="36.7" width="4.4" height="4.4" fill="#000" stroke="#d4d4d4" stroke-width="1"/>
<rect x="242.9" y="63.3" width="4.4" height="4.4" fill="#000" stroke="#d4d4d4" stroke-width="1"/>
<rect x="242.9" y="89.9" width="4.4" height="4.4" fill="#000" stroke="#d4d4d4" stroke-width="1"/>
<rect x="242.9" y="116.5" width="4.4" height="4.4" fill="#000" stroke="#d4d4d4" stroke-width="1"/>
<rect x="242.9" y="143.0" width="4.4" height="4.4" fill="#000" stroke="#d4d4d4" stroke-width="1"/>
<rect x="242.9" y="169.5" width="4.4" height="4.4" fill="#000" stroke="#d4d4d4" stroke-width="1"/>
<rect x="270.0" y="36.7" width="4.4" height="4.4" fill="#000" stroke="#d4d4d4" stroke-width="1"/>
<rect x="270.0" y="63.3" width="4.4" height="4.4" fill="#000" stroke="#d4d4d4" stroke-width="1"/>
<rect x="270.0" y="89.9" width="4.4" height="4.4" fill="#000" stroke="#d4d4d4" stroke-width="1"/>
<rect x="270.0" y="116.5" width="4.4" height="4.4" fill="#000" stroke="#d4d4d4" stroke-width="1"/>
<rect x="270.0" y="143.0" width="4.4" height="4.4" fill="#000" stroke="#d4d4d4" stroke-width="1"/>
<rect x="270.0" y="169.5" width="4.4" height="4.4" fill="#000" stroke="#d4d4d4" stroke-width="1"/>
<path d="M4 114.8H332.5" stroke="#222" stroke-width="0.7" opacity="0.85"/>
<path d="M167.6 8.0V220.0" stroke="#222" stroke-width="0.7" opacity="0.85"/>
<path d="M4.5 7.50V220.50H331.8" stroke="#555" stroke-width="1" fill="none"/>
<path d="M16.30 220.50v4.5" stroke="#555" stroke-width="0.8"/>
<path d="M43.36 220.50v2.2" stroke="#999" stroke-width="0.8"/>
<path d="M70.42 220.50v2.2" stroke="#999" stroke-width="0.8"/>
<path d="M97.48 220.50v2.2" stroke="#999" stroke-width="0.8"/>
<path d="M124.54 220.50v2.2" stroke="#999" stroke-width="0.8"/>
<path d="M151.60 220.50v4.5" stroke="#555" stroke-width="0.8"/>
<path d="M178.66 220.50v2.2" stroke="#999" stroke-width="0.8"/>
<path d="M205.72 220.50v2.2" stroke="#999" stroke-width="0.8"/>
<path d="M232.78 220.50v2.2" stroke="#999" stroke-width="0.8"/>
<path d="M259.84 220.50v2.2" stroke="#999" stroke-width="0.8"/>
<path d="M286.90 220.50v4.5" stroke="#555" stroke-width="0.8"/>
<path d="M313.96 220.50v2.2" stroke="#999" stroke-width="0.8"/>
<path d="M4.5 29.25h-2.2" stroke="#999" stroke-width="0.8"/>
<path d="M4.5 55.80h-2.2" stroke="#999" stroke-width="0.8"/>
<path d="M4.5 82.35h-2.2" stroke="#999" stroke-width="0.8"/>
<path d="M4.5 108.90h-4.5" stroke="#555" stroke-width="0.8"/>
<path d="M4.5 135.45h-2.2" stroke="#999" stroke-width="0.8"/>
<path d="M4.5 162.00h-2.2" stroke="#999" stroke-width="0.8"/>
<path d="M4.5 188.55h-2.2" stroke="#999" stroke-width="0.8"/>
<rect x="278.5" y="17.50" width="43.0" height="130.30" fill="rgba(235,235,235,0.68)" stroke="#9a9a9a" stroke-width="0.8"/>
<rect x="306.5" y="24.60" width="11.5" height="117.00" fill="url(#jet)"/>
<path d="M303.6 53.00h2.9" stroke="#444" stroke-width="0.8"/>
<path d="M303.6 100.30h2.9" stroke="#444" stroke-width="0.8"/></svg>
<span class="t" style="font-size:6.3px;color:#5a5a5a;left:374.18px;top:374.47px;">2000</span>
<span class="t" style="font-size:6.3px;color:#5a5a5a;left:374.18px;top:421.77px;">1000</span>
<span class="t" style="font-size:8.4px;color:#1c9ad6;font-weight:700;letter-spacing:-0.101px;left:178.55px;top:323.19px;">2θ - Int. Intensity, counts ° (Peak No: 1)</span>
<span class="t" style="font-size:6.3px;color:#444;left:98.40px;top:552.77px;">-2</span>
<span class="t" style="font-size:6.3px;color:#444;left:231.17px;top:552.77px;">-1.5</span>
<span class="t" style="font-size:6.3px;color:#444;left:369.10px;top:552.77px;">-1</span>
<span class="t" style="font-size:7px;color:#222;font-weight:700;letter-spacing:-0.104px;left:238.50px;top:558.77px;">X, mm</span>
<span class="t" style="font-size:6.3px;color:#444;left:80.68px;top:430.37px;">3</span>
<span class="t" style="font-size:7px;color:#222;font-weight:700;letter-spacing:0.041px;left:67.80px;top:446.10px;transform:translate(-50%,-50%) rotate(-90deg);">Y, mm</span>
<div style="left:154px;top:572px;width:28px;height:17.5px;box-sizing:border-box;background:#f2f2f2;border:1px solid #dedede;"><svg style="left:-1px;top:-1px;opacity:0.5" width="28" height="17.5" viewBox="0 0 28 17.5"><path d="M14.75 5.25L9.35 9.15L14.75 13.05" fill="none" stroke="url(#gb)" stroke-width="2.5" stroke-linecap="round" stroke-linejoin="miter"/><path d="M14.75 4.95L10.55 8.25" fill="none" stroke="#9cc8ff" stroke-width="0.7" stroke-linecap="round" opacity="0.9"/><path d="M20.05 5.25L14.65 9.15L20.05 13.05" fill="none" stroke="url(#gb)" stroke-width="2.5" stroke-linecap="round" stroke-linejoin="miter"/><path d="M20.05 4.95L15.85 8.25" fill="none" stroke="#9cc8ff" stroke-width="0.7" stroke-linecap="round" opacity="0.9"/></svg></div>
<div style="left:187.7px;top:572px;width:28px;height:17.5px;box-sizing:border-box;background:#f2f2f2;border:1px solid #dedede;"><svg style="left:-1px;top:-1px;opacity:0.5" width="28" height="17.5" viewBox="0 0 28 17.5"><path d="M17.40 5.25L12.00 9.15L17.40 13.05" fill="none" stroke="url(#gb)" stroke-width="2.5" stroke-linecap="round" stroke-linejoin="miter"/><path d="M17.40 4.95L13.20 8.25" fill="none" stroke="#9cc8ff" stroke-width="0.7" stroke-linecap="round" opacity="0.9"/></svg></div>
<div style="left:250px;top:572px;width:28px;height:17.5px;box-sizing:border-box;background:#f2f2f2;border:1px solid #dedede;"><svg style="left:-1px;top:-1px;opacity:0.5" width="28" height="17.5" viewBox="0 0 28 17.5"><path d="M10.60 5.25L16.00 9.15L10.60 13.05" fill="none" stroke="url(#gb)" stroke-width="2.5" stroke-linecap="round" stroke-linejoin="miter"/><path d="M10.60 4.95L14.80 8.25" fill="none" stroke="#9cc8ff" stroke-width="0.7" stroke-linecap="round" opacity="0.9"/></svg></div>
<div style="left:284px;top:572px;width:28px;height:17.5px;box-sizing:border-box;background:#f2f2f2;border:1px solid #dedede;"><svg style="left:-1px;top:-1px;opacity:0.5" width="28" height="17.5" viewBox="0 0 28 17.5"><path d="M13.25 5.25L18.65 9.15L13.25 13.05" fill="none" stroke="url(#gb)" stroke-width="2.5" stroke-linecap="round" stroke-linejoin="miter"/><path d="M13.25 4.95L17.45 8.25" fill="none" stroke="#9cc8ff" stroke-width="0.7" stroke-linecap="round" opacity="0.9"/><path d="M7.95 5.25L13.35 9.15L7.95 13.05" fill="none" stroke="url(#gb)" stroke-width="2.5" stroke-linecap="round" stroke-linejoin="miter"/><path d="M7.95 4.95L12.15 8.25" fill="none" stroke="#9cc8ff" stroke-width="0.7" stroke-linecap="round" opacity="0.9"/></svg></div>
<span class="t" style="font-size:7.8px;color:#444;letter-spacing:0.057px;left:225.30px;top:579.00px;">1 / 1</span>
<div style="left:46px;top:593.2px;width:375px;height:13.6px;background:#d6d6d6;"></div>
<div style="left:46px;top:593.2px;width:26px;height:13.6px;background:#fff;"></div>
<span class="t" style="font-size:7px;color:#2a7fd0;letter-spacing:-0.263px;left:51.90px;top:596.07px;">Map</span>
<span class="t" style="font-size:7px;color:#333;letter-spacing:-0.031px;left:77.80px;top:596.07px;">Chart</span>
</div>
<div class="panel panel-image-profile" style="left:0;top:0">
<div style="left:424px;top:54px;width:446.6px;height:293px;background:#fff;border:1px solid #d4d4d4;box-sizing:border-box;"></div>
<span class="t" style="font-size:10px;color:#6aa6dc;letter-spacing:-0.077px;left:442.30px;top:59.53px;">Image Profile</span>
<span class="t" style="font-size:6.6px;color:#4a5a96;left:846.70px;top:61.51px;">?</span><svg style="left:857.5px;top:60.199999999999996px" width="6" height="7" viewBox="0 0 6 7"><path d="M1.8 0.4h2.4v2.6h-2.4z" fill="#6a6a6a"/><path d="M0.9 3.3h4.2" stroke="#555" stroke-width="0.9"/><path d="M3 3.6v2.6" stroke="#666" stroke-width="0.7"/></svg>
<span class="t" style="font-size:6.6px;color:#4a4a4a;letter-spacing:0.079px;left:466.00px;top:78.41px;">Scan No. : 32, Time: 613.57 min, X: -1.0555 mm, Y: 3.0630 mm</span>
<svg style="left:455px;top:84px" width="400" height="235" viewBox="0 0 400 235"><defs><clipPath id="dc"><rect x="11" y="38" width="381" height="151"/></clipPath><radialGradient id="glow" cx="0" cy="0.5" r="1" gradientTransform="translate(0 0) scale(0.42 1.1)"><stop offset="0" stop-color="#3020ff" stop-opacity="1"/><stop offset="0.2" stop-color="#2c1cfc" stop-opacity="0.85"/><stop offset="0.45" stop-color="#2014e8" stop-opacity="0.42"/><stop offset="0.75" stop-color="#1808c0" stop-opacity="0.18"/><stop offset="1" stop-color="#1000a0" stop-opacity="0"/></radialGradient><radialGradient id="spot"><stop offset="0" stop-color="#ffe040"/><stop offset="0.35" stop-color="#ff4000"/><stop offset="0.7" stop-color="#e000c0" stop-opacity="0.8"/><stop offset="1" stop-color="#8000ff" stop-opacity="0"/></radialGradient><radialGradient id="spot2"><stop offset="0" stop-color="#f038b0"/><stop offset="0.5" stop-color="#b828e8" stop-opacity="0.85"/><stop offset="1" stop-color="#6000ff" stop-opacity="0"/></radialGradient></defs>
<rect x="10.5" y="3" width="382" height="221.5" fill="#fff" stroke="#c4c4c4" stroke-width="1"/>
<g clip-path="url(#dc)">
<rect x="11" y="38" width="381" height="151" fill="#02001c"/>
<rect x="11" y="38" width="381" height="151" fill="url(#glow)"/>
<rect x="11" y="38" width="381" height="151" filter="url(#bnoise)" opacity="0.9"/>
<rect x="11" y="38" width="381" height="151" filter="url(#knoise)" opacity="0.5" transform="translate(0.5 0.5)"/>
<path d="M22.6 38 Q68.2 113.5 23.5 189" stroke="#3a20f0" stroke-width="4.8" fill="none" opacity="0.3" filter="url(#b2)"/>
<path d="M86.3 38 Q108.3 113.5 86.3 189" stroke="#3a20f0" stroke-width="7.7" fill="none" opacity="0.42" filter="url(#b2)"/>
<path d="M111.5 38 Q135.3 113.5 111.5 189" stroke="#3a20f0" stroke-width="5.1" fill="none" opacity="0.3" filter="url(#b2)"/>
<path d="M115.5 38 Q138.5 113.5 115.5 189" stroke="#3a20f0" stroke-width="7.4" fill="none" opacity="0.42" filter="url(#b2)"/>
<path d="M147.8 38 Q162.2 113.5 147.8 189" stroke="#3a20f0" stroke-width="5.1" fill="none" opacity="0.3" filter="url(#b2)"/>
<path d="M265.0 38 Q269.7 113.5 266.0 189" stroke="#3a20f0" stroke-width="7.0" fill="none" opacity="0.42" filter="url(#b2)"/>
<path d="M303.5 38 Q306.0 113.5 303.0 189" stroke="#3a20f0" stroke-width="5.8" fill="none" opacity="0.3" filter="url(#b2)"/>
<path d="M344.0 38 Q345.6 113.5 344.0 189" stroke="#3a20f0" stroke-width="5.8" fill="none" opacity="0.3" filter="url(#b2)"/>
<path d="M22.6 38 Q68.2 113.5 23.5 189" stroke="#5840ff" stroke-width="1.5" fill="none" opacity="0.9" filter="url(#b05)"/>
<path d="M15.0 38 Q66.5 113.5 16.0 189" stroke="#4830f8" stroke-width="1.0" fill="none" opacity="0.28" filter="url(#b05)"/>
<path d="M64.0 38 Q86.0 113.5 64.0 189" stroke="#4028f0" stroke-width="1.0" fill="none" opacity="0.5" filter="url(#b05)"/>
<path d="M77.6 38 Q96.4 113.5 77.6 189" stroke="#4c30f8" stroke-width="1.3" fill="none" opacity="0.7" filter="url(#b05)"/>
<path d="M86.3 38 Q108.3 113.5 86.3 189" stroke="#6a3cff" stroke-width="2.4" fill="none" opacity="1" filter="url(#b05)"/>
<path d="M111.5 38 Q135.3 113.5 111.5 189" stroke="#5634ff" stroke-width="1.6" fill="none" opacity="0.95" filter="url(#b05)"/>
<path d="M115.5 38 Q138.5 113.5 115.5 189" stroke="#6a3cff" stroke-width="2.3" fill="none" opacity="1" filter="url(#b05)"/>
<path d="M147.8 38 Q162.2 113.5 147.8 189" stroke="#5034f8" stroke-width="1.6" fill="none" opacity="0.9" filter="url(#b05)"/>
<path d="M173.0 38 Q183.0 113.5 173.0 189" stroke="#3c28f0" stroke-width="1.0" fill="none" opacity="0.55" filter="url(#b05)"/>
<path d="M219.0 38 Q226.2 113.5 218.5 189" stroke="#4028f0" stroke-width="1.3" fill="none" opacity="0.7" filter="url(#b05)"/>
<path d="M265.0 38 Q269.7 113.5 266.0 189" stroke="#5a3cff" stroke-width="2.2" fill="none" opacity="1" filter="url(#b05)"/>
<path d="M283.5 38 Q286.5 113.5 283.5 189" stroke="#4028f0" stroke-width="1.3" fill="none" opacity="0.7" filter="url(#b05)"/>
<path d="M303.5 38 Q306.0 113.5 303.0 189" stroke="#4a34f8" stroke-width="1.8" fill="none" opacity="0.95" filter="url(#b05)"/>
<path d="M344.0 38 Q345.6 113.5 344.0 189" stroke="#4a34f8" stroke-width="1.8" fill="none" opacity="0.95" filter="url(#b05)"/>
<path d="M374.0 38 Q374.6 113.5 374.0 189" stroke="#3828e8" stroke-width="1.0" fill="none" opacity="0.5" filter="url(#b05)"/>
<path d="M86.3 38 Q108.3 113.5 86.3 189" pathLength="100" stroke-dasharray="0 8 12 100" stroke="#ff3070" stroke-width="2.0" fill="none" opacity="0.9" stroke-linecap="round" filter="url(#b05)"/>
<path d="M86.3 38 Q108.3 113.5 86.3 189" pathLength="100" stroke-dasharray="0 22 36 100" stroke="#b038f0" stroke-width="1.6" fill="none" opacity="0.8" stroke-linecap="round" filter="url(#b05)"/>
<path d="M86.3 38 Q108.3 113.5 86.3 189" pathLength="100" stroke-dasharray="0 64 24 100" stroke="#b838e8" stroke-width="1.6" fill="none" opacity="0.75" stroke-linecap="round" filter="url(#b05)"/>
<path d="M115.5 38 Q138.5 113.5 115.5 189" pathLength="100" stroke-dasharray="0 30 28 100" stroke="#ff2060" stroke-width="2.8" fill="none" opacity="0.95" stroke-linecap="round" filter="url(#b05)"/>
<path d="M115.5 38 Q138.5 113.5 115.5 189" pathLength="100" stroke-dasharray="0 35 15 100" stroke="#ff9a20" stroke-width="1.4" fill="none" opacity="1" stroke-linecap="round" filter="url(#b05)"/>
<path d="M115.5 38 Q138.5 113.5 115.5 189" pathLength="100" stroke-dasharray="0 10 18 100" stroke="#9038f8" stroke-width="1.4" fill="none" opacity="0.7" stroke-linecap="round" filter="url(#b05)"/>
<path d="M265.0 38 Q269.7 113.5 266.0 189" pathLength="100" stroke-dasharray="0 30 30 100" stroke="#7840ff" stroke-width="1.4" fill="none" opacity="0.6" stroke-linecap="round" filter="url(#b05)"/>
<rect x="11" y="38" width="381" height="151" filter="url(#knoise)" opacity="0.6"/>
<ellipse cx="79.5" cy="107.30000000000001" rx="9.600000000000001" ry="0.9" fill="#c840ff" opacity="0.8"/>
<circle cx="79.5" cy="107.30000000000001" r="3.0" fill="url(#spot)"/>
<ellipse cx="262.79999999999995" cy="102.4" rx="8.959999999999999" ry="0.9" fill="#c840ff" opacity="0.8"/>
<circle cx="262.79999999999995" cy="102.4" r="2.8" fill="url(#spot)"/>
<ellipse cx="61.6" cy="119.9" rx="1.9" ry="0.8" fill="url(#spot2)"/>
<ellipse cx="124.4" cy="50.5" rx="1.4" ry="0.6" fill="url(#spot2)"/>
<ellipse cx="65.0" cy="75.0" rx="2.9" ry="1.2" fill="url(#spot2)"/>
<ellipse cx="110.6" cy="120.7" rx="1.4" ry="0.9" fill="url(#spot2)"/>
<ellipse cx="60.6" cy="63.0" rx="2.4" ry="1.0" fill="url(#spot2)"/>
<ellipse cx="143.1" cy="138.4" rx="0.9" ry="0.6" fill="url(#spot2)"/>
<ellipse cx="145.8" cy="126.7" rx="1.0" ry="0.8" fill="url(#spot2)"/>
<ellipse cx="156.4" cy="80.1" rx="2.4" ry="1.0" fill="url(#spot2)"/>
<ellipse cx="138.7" cy="174.6" rx="2.2" ry="0.9" fill="url(#spot2)"/>
<ellipse cx="179.2" cy="60.5" rx="1.0" ry="0.8" fill="url(#spot2)"/>
<ellipse cx="28.8" cy="112.8" rx="1.9" ry="0.8" fill="url(#spot2)"/>
<ellipse cx="149.2" cy="165.0" rx="2.2" ry="0.9" fill="url(#spot2)"/>
<ellipse cx="116.0" cy="118.4" rx="1.4" ry="0.9" fill="url(#spot2)"/>
<ellipse cx="169.5" cy="139.9" rx="1.1" ry="0.6" fill="url(#spot2)"/>
<ellipse cx="183.5" cy="138.3" rx="1.3" ry="0.7" fill="url(#spot2)"/>
<ellipse cx="179.3" cy="172.2" rx="1.3" ry="1.0" fill="url(#spot2)"/>
<ellipse cx="138.6" cy="71.6" rx="1.8" ry="1.0" fill="url(#spot2)"/>
<ellipse cx="69.2" cy="50.2" rx="2.9" ry="1.2" fill="url(#spot2)"/>
<ellipse cx="37.3" cy="157.1" rx="1.4" ry="0.9" fill="url(#spot2)"/>
<ellipse cx="26.3" cy="102.9" rx="1.2" ry="0.9" fill="url(#spot2)"/>
<ellipse cx="30.2" cy="130.1" rx="1.4" ry="0.6" fill="url(#spot2)"/>
<ellipse cx="139.4" cy="89.0" rx="1.2" ry="0.8" fill="url(#spot2)"/>
<ellipse cx="184.8" cy="85.9" rx="0.8" ry="0.6" fill="url(#spot2)"/>
<ellipse cx="120.2" cy="45.5" rx="1.7" ry="0.7" fill="url(#spot2)"/>
<ellipse cx="70.2" cy="79.2" rx="1.6" ry="1.2" fill="url(#spot2)"/>
<ellipse cx="181.7" cy="90.3" rx="1.2" ry="0.8" fill="url(#spot2)"/>
<ellipse cx="168.3" cy="95.8" rx="2.2" ry="0.9" fill="url(#spot2)"/>
<ellipse cx="127.3" cy="127.4" rx="1.3" ry="1.0" fill="url(#spot2)"/>
<ellipse cx="123.5" cy="177.4" rx="1.8" ry="1.0" fill="url(#spot2)"/>
<ellipse cx="92.9" cy="145.4" rx="1.3" ry="0.7" fill="url(#spot2)"/>
<ellipse cx="93.9" cy="78.4" rx="1.4" ry="0.8" fill="url(#spot2)"/>
<ellipse cx="24.9" cy="101.2" rx="1.8" ry="1.0" fill="url(#spot2)"/>
<ellipse cx="26.2" cy="130.3" rx="1.8" ry="1.2" fill="url(#spot2)"/>
<ellipse cx="32.7" cy="132.0" rx="1.6" ry="0.9" fill="url(#spot2)"/>
<ellipse cx="133.0" cy="92.1" rx="2.2" ry="1.2" fill="url(#spot2)"/>
<ellipse cx="142.6" cy="44.2" rx="0.8" ry="0.6" fill="url(#spot2)"/>
<ellipse cx="179.1" cy="77.4" rx="1.6" ry="0.9" fill="url(#spot2)"/>
<ellipse cx="119.0" cy="87.4" rx="1.2" ry="0.8" fill="url(#spot2)"/>
<ellipse cx="73.7" cy="94.5" rx="1.8" ry="1.0" fill="url(#spot2)"/>
<ellipse cx="71.7" cy="95.7" rx="0.9" ry="0.6" fill="url(#spot2)"/>
<ellipse cx="73.2" cy="73.3" rx="1.2" ry="0.8" fill="url(#spot2)"/>
<ellipse cx="76.1" cy="139.3" rx="1.6" ry="1.2" fill="url(#spot2)"/>
<ellipse cx="39.5" cy="87.7" rx="1.2" ry="0.8" fill="url(#spot2)"/>
<ellipse cx="94.0" cy="165.1" rx="0.9" ry="0.7" fill="url(#spot2)"/>
<ellipse cx="77.5" cy="135.3" rx="2.4" ry="1.0" fill="url(#spot2)"/>
<ellipse cx="66.8" cy="155.1" rx="0.9" ry="0.6" fill="url(#spot2)"/>
<ellipse cx="74.1" cy="162.2" rx="1.5" ry="1.0" fill="url(#spot2)"/>
<ellipse cx="162.9" cy="90.3" rx="1.6" ry="1.2" fill="url(#spot2)"/>
<ellipse cx="153.6" cy="91.1" rx="1.7" ry="0.7" fill="url(#spot2)"/>
<ellipse cx="70.3" cy="156.1" rx="1.9" ry="0.8" fill="url(#spot2)"/>
<ellipse cx="79.1" cy="101.5" rx="2.2" ry="0.9" fill="url(#spot2)"/>
<ellipse cx="28.8" cy="100.9" rx="0.9" ry="0.7" fill="url(#spot2)"/>
<ellipse cx="100.3" cy="161.7" rx="2.4" ry="1.0" fill="url(#spot2)"/>
<ellipse cx="113.5" cy="183.9" rx="1.8" ry="1.2" fill="url(#spot2)"/>
<ellipse cx="28.2" cy="107.2" rx="2.2" ry="1.2" fill="url(#spot2)"/>
<ellipse cx="111.1" cy="170.0" rx="1.1" ry="0.6" fill="url(#spot2)"/>
<ellipse cx="42.4" cy="76.5" rx="0.9" ry="0.6" fill="url(#spot2)"/>
<ellipse cx="168.2" cy="171.5" rx="1.3" ry="1.0" fill="url(#spot2)"/>
<ellipse cx="25.1" cy="149.1" rx="1.3" ry="0.7" fill="url(#spot2)"/>
<ellipse cx="61.7" cy="43.9" rx="2.4" ry="1.0" fill="url(#spot2)"/>
<ellipse cx="31.6" cy="173.4" rx="1.1" ry="0.6" fill="url(#spot2)"/>
<ellipse cx="43.3" cy="181.9" rx="2.4" ry="1.0" fill="url(#spot2)"/>
<ellipse cx="317.7" cy="49.9" rx="1.0" ry="0.7" fill="url(#spot2)"/>
<ellipse cx="60.6" cy="169.7" rx="0.9" ry="0.6" fill="url(#spot2)"/>
<ellipse cx="104.3" cy="80.7" rx="0.9" ry="0.7" fill="url(#spot2)"/>
<ellipse cx="196.8" cy="123.8" rx="1.2" ry="0.9" fill="url(#spot2)"/>
<ellipse cx="297.2" cy="77.0" rx="2.4" ry="1.0" fill="url(#spot2)"/>
<ellipse cx="34.0" cy="87.9" rx="0.8" ry="0.6" fill="url(#spot2)"/>
<ellipse cx="304.2" cy="47.7" rx="0.8" ry="0.6" fill="url(#spot2)"/>
<ellipse cx="195.1" cy="45.8" rx="1.6" ry="1.2" fill="url(#spot2)"/>
<ellipse cx="207.2" cy="112.0" rx="1.3" ry="0.7" fill="url(#spot2)"/>
<ellipse cx="41.8" cy="96.9" rx="1.6" ry="0.9" fill="url(#spot2)"/>
<ellipse cx="149.6" cy="68.7" rx="1.9" ry="0.8" fill="url(#spot2)"/>
<ellipse cx="61.2" cy="121.6" rx="2.9" ry="1.2" fill="url(#spot2)"/>
<ellipse cx="311.6" cy="123.2" rx="1.1" ry="0.6" fill="url(#spot2)"/>
<ellipse cx="186.9" cy="135.3" rx="2.4" ry="1.0" fill="url(#spot2)"/>
<ellipse cx="252.5" cy="47.3" rx="1.2" ry="0.9" fill="url(#spot2)"/>
<ellipse cx="153.9" cy="112.9" rx="2.2" ry="1.2" fill="url(#spot2)"/>
<ellipse cx="171.9" cy="141.6" rx="1.2" ry="0.9" fill="url(#spot2)"/>
<ellipse cx="106.4" cy="118.7" rx="1.6" ry="1.2" fill="url(#spot2)"/>
<ellipse cx="314.6" cy="73.5" rx="0.9" ry="0.7" fill="url(#spot2)"/>
<ellipse cx="364.3" cy="95.3" rx="1.8" ry="1.0" fill="url(#spot2)"/>
<ellipse cx="60.3" cy="141.1" rx="2.9" ry="1.2" fill="url(#spot2)"/>
<ellipse cx="264.0" cy="147.4" rx="1.3" ry="1.0" fill="url(#spot2)"/>
<ellipse cx="317.7" cy="144.9" rx="1.4" ry="0.9" fill="url(#spot2)"/>
<ellipse cx="103.0" cy="97.4" rx="1.3" ry="1.0" fill="url(#spot2)"/>
<ellipse cx="225.5" cy="136.6" rx="1.4" ry="0.9" fill="url(#spot2)"/>
<ellipse cx="320.7" cy="90.5" rx="0.8" ry="0.6" fill="url(#spot2)"/>
<ellipse cx="329.8" cy="138.7" rx="2.2" ry="1.2" fill="url(#spot2)"/>
<ellipse cx="231.0" cy="156.8" rx="0.9" ry="0.6" fill="url(#spot2)"/>
<ellipse cx="54.8" cy="149.6" rx="1.3" ry="1.0" fill="url(#spot2)"/>
<ellipse cx="220.2" cy="167.1" rx="0.9" ry="0.7" fill="url(#spot2)"/>
<ellipse cx="105.3" cy="67.1" rx="1.7" ry="0.7" fill="url(#spot2)"/>
<ellipse cx="244.8" cy="150.3" rx="1.6" ry="0.9" fill="url(#spot2)"/>
<ellipse cx="152.1" cy="98.5" rx="1.9" ry="0.8" fill="url(#spot2)"/>
<ellipse cx="375.4" cy="95.4" rx="1.7" ry="0.7" fill="url(#spot2)"/>
<ellipse cx="329.7" cy="181.2" rx="2.2" ry="0.9" fill="url(#spot2)"/>
<ellipse cx="73.3" cy="99.2" rx="1.0" ry="0.7" fill="url(#spot2)"/>
<ellipse cx="50.8" cy="149.5" rx="2.9" ry="1.2" fill="url(#spot2)"/>
<ellipse cx="233.8" cy="165.4" rx="1.3" ry="0.7" fill="url(#spot2)"/>
<ellipse cx="295.5" cy="62.3" rx="1.8" ry="1.0" fill="url(#spot2)"/>
<ellipse cx="363.7" cy="164.5" rx="1.8" ry="1.0" fill="url(#spot2)"/>
<ellipse cx="265.4" cy="165.0" rx="1.8" ry="1.0" fill="url(#spot2)"/>
<ellipse cx="346.7" cy="85.5" rx="1.9" ry="0.8" fill="url(#spot2)"/>
<ellipse cx="314.9" cy="70.1" rx="1.8" ry="1.0" fill="url(#spot2)"/>
<ellipse cx="104.1" cy="111.0" rx="1.7" ry="0.7" fill="url(#spot2)"/>
<ellipse cx="384.7" cy="110.5" rx="1.5" ry="1.0" fill="url(#spot2)"/>
<ellipse cx="189.6" cy="162.0" rx="1.6" ry="1.2" fill="url(#spot2)"/>
<ellipse cx="194.5" cy="145.5" rx="1.2" ry="0.9" fill="url(#spot2)"/>
<ellipse cx="189.3" cy="74.3" rx="0.9" ry="0.7" fill="url(#spot2)"/>
<ellipse cx="372.6" cy="164.8" rx="1.0" ry="0.7" fill="url(#spot2)"/>
<ellipse cx="304.4" cy="60.9" rx="1.3" ry="1.0" fill="url(#spot2)"/>
<ellipse cx="350.6" cy="78.0" rx="1.1" ry="0.6" fill="url(#spot2)"/>
<ellipse cx="83.4" cy="54.2" rx="0.8" ry="0.6" fill="url(#spot2)"/>
<ellipse cx="49.6" cy="161.9" rx="1.0" ry="0.8" fill="url(#spot2)"/>
<ellipse cx="148.0" cy="125.1" rx="2.2" ry="1.2" fill="url(#spot2)"/>
<ellipse cx="17.6" cy="89.5" rx="2.2" ry="0.9" fill="url(#spot2)"/>
<ellipse cx="196.2" cy="71.5" rx="2.4" ry="1.0" fill="url(#spot2)"/>
<ellipse cx="160.8" cy="119.9" rx="1.1" ry="0.6" fill="url(#spot2)"/>
<ellipse cx="43.4" cy="103.7" rx="1.6" ry="0.9" fill="url(#spot2)"/>
<ellipse cx="51.1" cy="177.5" rx="1.4" ry="0.8" fill="url(#spot2)"/>
<ellipse cx="297.5" cy="83.9" rx="2.2" ry="1.2" fill="url(#spot2)"/>
<ellipse cx="55.0" cy="177.9" rx="1.0" ry="0.8" fill="url(#spot2)"/>
<ellipse cx="263.7" cy="114.8" rx="1.1" ry="0.6" fill="url(#spot2)"/>
<ellipse cx="268.1" cy="123.1" rx="1.0" ry="0.7" fill="url(#spot2)"/>
<ellipse cx="81.8" cy="170.0" rx="2.9" ry="1.2" fill="url(#spot2)"/>
<ellipse cx="60.9" cy="176.1" rx="1.3" ry="0.7" fill="url(#spot2)"/>
<ellipse cx="255.6" cy="135.2" rx="1.6" ry="0.9" fill="url(#spot2)"/>
<ellipse cx="256.5" cy="107.4" rx="1.2" ry="0.8" fill="url(#spot2)"/>
<ellipse cx="278.1" cy="56.6" rx="1.7" ry="0.7" fill="url(#spot2)"/>
<ellipse cx="149.0" cy="79.5" rx="1.2" ry="0.9" fill="url(#spot2)"/>
<ellipse cx="340.5" cy="47.1" rx="1.8" ry="1.0" fill="url(#spot2)"/>
<ellipse cx="107.2" cy="152.5" rx="1.4" ry="0.8" fill="url(#spot2)"/>
<ellipse cx="367.5" cy="106.0" rx="1.1" ry="0.6" fill="url(#spot2)"/>
<ellipse cx="200.8" cy="185.4" rx="1.3" ry="0.7" fill="url(#spot2)"/>
<ellipse cx="235.1" cy="139.8" rx="1.3" ry="1.0" fill="url(#spot2)"/>
<ellipse cx="83.9" cy="68.4" rx="2.2" ry="0.9" fill="url(#spot2)"/>
<ellipse cx="319.3" cy="149.6" rx="1.5" ry="1.0" fill="url(#spot2)"/>
<ellipse cx="335.6" cy="156.7" rx="1.5" ry="1.0" fill="url(#spot2)"/>
<ellipse cx="227.0" cy="70.3" rx="1.4" ry="0.8" fill="url(#spot2)"/>
</g>
<rect x="338.6" y="47.099999999999994" width="45.3" height="132.8" fill="rgba(226,226,226,0.7)" stroke="#9a9a9a" stroke-width="0.8"/>
<rect x="366.5" y="55" width="12.8" height="117.3" fill="url(#hot)"/>
<path d="M363.6 110.6h2.9" stroke="#444" stroke-width="0.8"/>
<path d="M363.6 173.39999999999998h2.9" stroke="#444" stroke-width="0.8"/>
<path d="M364.79999999999995 125.23h1.7" stroke="#777" stroke-width="0.4"/>
<path d="M364.79999999999995 121.55h1.7" stroke="#777" stroke-width="0.4"/>
<path d="M364.79999999999995 118.93h1.7" stroke="#777" stroke-width="0.4"/>
<path d="M364.79999999999995 116.90h1.7" stroke="#777" stroke-width="0.4"/>
<path d="M364.79999999999995 115.24h1.7" stroke="#777" stroke-width="0.4"/>
<path d="M364.79999999999995 113.84h1.7" stroke="#777" stroke-width="0.4"/>
<path d="M364.79999999999995 112.63h1.7" stroke="#777" stroke-width="0.4"/>
<path d="M364.79999999999995 111.56h1.7" stroke="#777" stroke-width="0.4"/>
<path d="M10.5 3V224.5H392.5" stroke="#444" stroke-width="1" fill="none"/>
<path d="M10.5 208.50h-2.2" stroke="#999" stroke-width="0.8"/>
<path d="M10.5 189.00h-4.5" stroke="#444" stroke-width="0.8"/>
<path d="M10.5 169.50h-2.2" stroke="#999" stroke-width="0.8"/>
<path d="M10.5 150.00h-2.2" stroke="#999" stroke-width="0.8"/>
<path d="M10.5 130.50h-2.2" stroke="#999" stroke-width="0.8"/>
<path d="M10.5 111.00h-2.2" stroke="#999" stroke-width="0.8"/>
<path d="M10.5 91.50h-4.5" stroke="#444" stroke-width="0.8"/>
<path d="M10.5 72.00h-2.2" stroke="#999" stroke-width="0.8"/>
<path d="M10.5 52.50h-2.2" stroke="#999" stroke-width="0.8"/>
<path d="M10.5 33.00h-2.2" stroke="#999" stroke-width="0.8"/>
<path d="M10.5 13.50h-2.2" stroke="#999" stroke-width="0.8"/>
<path d="M30.52 224.5v2.6" stroke="#999" stroke-width="0.8"/>
<path d="M50.04 224.5v2.6" stroke="#999" stroke-width="0.8"/>
<path d="M69.56 224.5v2.6" stroke="#999" stroke-width="0.8"/>
<path d="M89.08 224.5v2.6" stroke="#999" stroke-width="0.8"/>
<path d="M108.60 224.5v5.5" stroke="#444" stroke-width="0.8"/>
<path d="M128.12 224.5v2.6" stroke="#999" stroke-width="0.8"/>
<path d="M147.64 224.5v2.6" stroke="#999" stroke-width="0.8"/>
<path d="M167.16 224.5v2.6" stroke="#999" stroke-width="0.8"/>
<path d="M186.68 224.5v2.6" stroke="#999" stroke-width="0.8"/>
<path d="M206.20 224.5v5.5" stroke="#444" stroke-width="0.8"/>
<path d="M225.72 224.5v2.6" stroke="#999" stroke-width="0.8"/>
<path d="M245.24 224.5v2.6" stroke="#999" stroke-width="0.8"/>
<path d="M264.76 224.5v2.6" stroke="#999" stroke-width="0.8"/>
<path d="M284.28 224.5v2.6" stroke="#999" stroke-width="0.8"/>
<path d="M303.80 224.5v5.5" stroke="#444" stroke-width="0.8"/>
<path d="M323.32 224.5v2.6" stroke="#999" stroke-width="0.8"/>
<path d="M342.84 224.5v2.6" stroke="#999" stroke-width="0.8"/>
<path d="M362.36 224.5v2.6" stroke="#999" stroke-width="0.8"/>
<path d="M381.88 224.5v2.6" stroke="#999" stroke-width="0.8"/></svg>
<span class="t" style="font-size:6.3px;color:#444;left:450.48px;top:171.97px;">500</span>
<span class="t" style="font-size:6.3px;color:#444;left:457.48px;top:269.97px;">0</span>
<span class="t" style="font-size:6.3px;color:#444;left:558.34px;top:316.17px;">500</span>
<span class="t" style="font-size:6.3px;color:#444;left:653.99px;top:316.17px;">1000</span>
<span class="t" style="font-size:6.3px;color:#444;left:751.59px;top:316.17px;">1500</span>
<span class="t" style="font-size:6.3px;color:#444;left:801.59px;top:191.67px;">1·10</span>
<span class="t" style="font-size:5.4px;color:#444;left:814.50px;top:190.83px;">3</span>
<span class="t" style="font-size:6.3px;color:#444;left:801.59px;top:251.37px;">1·10</span>
<span class="t" style="font-size:5.4px;color:#444;left:814.50px;top:250.53px;">0</span>
<div style="left:562.4px;top:326.2px;width:28.4px;height:17.4px;box-sizing:border-box;background:#ededed;border:1px solid #cfcfcf;"><svg style="left:-1px;top:-1px;opacity:1" width="28.4" height="17.4" viewBox="0 0 28.4 17.4"><path d="M14.95 5.20L9.55 9.10L14.95 13.00" fill="none" stroke="url(#gb)" stroke-width="2.5" stroke-linecap="round" stroke-linejoin="miter"/><path d="M14.95 4.90L10.75 8.20" fill="none" stroke="#9cc8ff" stroke-width="0.7" stroke-linecap="round" opacity="0.9"/><path d="M20.25 5.20L14.85 9.10L20.25 13.00" fill="none" stroke="url(#gb)" stroke-width="2.5" stroke-linecap="round" stroke-linejoin="miter"/><path d="M20.25 4.90L16.05 8.20" fill="none" stroke="#9cc8ff" stroke-width="0.7" stroke-linecap="round" opacity="0.9"/></svg></div>
<div style="left:596.3px;top:326.2px;width:28.4px;height:17.4px;box-sizing:border-box;background:#ededed;border:1px solid #cfcfcf;"><svg style="left:-1px;top:-1px;opacity:1" width="28.4" height="17.4" viewBox="0 0 28.4 17.4"><path d="M17.60 5.20L12.20 9.10L17.60 13.00" fill="none" stroke="url(#gb)" stroke-width="2.5" stroke-linecap="round" stroke-linejoin="miter"/><path d="M17.60 4.90L13.40 8.20" fill="none" stroke="#9cc8ff" stroke-width="0.7" stroke-linecap="round" opacity="0.9"/></svg></div>
<div style="left:671.1px;top:326.2px;width:28.6px;height:17.4px;box-sizing:border-box;background:#ededed;border:1px solid #cfcfcf;"><svg style="left:-1px;top:-1px;opacity:1" width="28.6" height="17.4" viewBox="0 0 28.6 17.4"><path d="M10.90 5.20L16.30 9.10L10.90 13.00" fill="none" stroke="url(#gb)" stroke-width="2.5" stroke-linecap="round" stroke-linejoin="miter"/><path d="M10.90 4.90L15.10 8.20" fill="none" stroke="#9cc8ff" stroke-width="0.7" stroke-linecap="round" opacity="0.9"/></svg></div>
<div style="left:705.2px;top:326.2px;width:28.6px;height:17.4px;box-sizing:border-box;background:#ededed;border:1px solid #cfcfcf;"><svg style="left:-1px;top:-1px;opacity:1" width="28.6" height="17.4" viewBox="0 0 28.6 17.4"><path d="M13.55 5.20L18.95 9.10L13.55 13.00" fill="none" stroke="url(#gb)" stroke-width="2.5" stroke-linecap="round" stroke-linejoin="miter"/><path d="M13.55 4.90L17.75 8.20" fill="none" stroke="#9cc8ff" stroke-width="0.7" stroke-linecap="round" opacity="0.9"/><path d="M8.25 5.20L13.65 9.10L8.25 13.00" fill="none" stroke="url(#gb)" stroke-width="2.5" stroke-linecap="round" stroke-linejoin="miter"/><path d="M8.25 4.90L12.45 8.20" fill="none" stroke="#9cc8ff" stroke-width="0.7" stroke-linecap="round" opacity="0.9"/></svg></div>
<div style="left:630.2px;top:328.4px;width:35.6px;height:13.4px;background:#fff;border:1px solid #d0d0d0;box-sizing:border-box;"></div>
<span class="t" style="font-size:6.4px;color:#555;left:644.45px;top:333.28px;">32</span>
<div style="left:424px;top:347px;width:446.6px;height:259px;background:#fff;border:1px solid #cdcdcd;box-sizing:border-box;border-top:none;"></div>
<div style="left:425.6px;top:347.5px;width:28px;height:14.5px;background:#1583c9;"></div>
<span class="t" style="font-size:6.8px;color:#fff;font-weight:700;letter-spacing:0.656px;left:432.10px;top:352.44px;">θ/2θ</span>
<div style="left:425.6px;top:361.6px;width:444px;height:2.4px;background:#1583c9;"></div>
<div style="left:426px;top:364.4px;width:221px;height:220.2px;border:2px solid #a9d1f2;box-sizing:border-box;"></div>
<svg style="left:460px;top:372px" width="199" height="200" viewBox="0 0 199 200"><rect x="12.2" y="3.5" width="169.4" height="180.8" fill="#fff" stroke="#c0c0c0" stroke-width="1"/>
<polyline fill="none" stroke="#f26a6a" stroke-width="0.62" stroke-linejoin="round" points="15.6,118.6 16.0,118.8 16.4,120.0 16.8,118.4 17.2,119.9 17.6,118.8 18.0,121.0 18.4,120.6 18.8,121.5 19.2,120.5 19.6,121.2 20.0,120.9 20.4,120.8 20.8,121.5 21.2,120.8 21.6,121.5 22.0,122.4 22.4,122.1 22.8,122.0 23.2,123.8 23.6,122.6 24.0,122.3 24.4,123.0 24.8,122.7 25.2,122.9 25.6,123.1 26.0,124.8 26.4,123.7 26.8,123.9 27.2,124.4 27.6,125.5 28.0,124.1 28.4,124.0 28.8,126.2 29.2,123.7 29.6,124.6 30.0,125.5 30.4,126.7 30.8,124.7 31.2,123.8 31.6,126.1 32.0,125.4 32.4,125.6 32.8,126.4 33.2,126.3 33.6,126.5 34.0,126.2 34.4,127.5 34.8,127.8 35.2,126.9 35.6,126.7 36.0,127.7 36.4,127.7 36.8,126.7 37.2,127.3 37.6,128.5 38.0,127.8 38.4,127.8 38.8,128.3 39.2,128.3 39.6,128.4 40.0,127.1 40.4,130.0 40.8,129.0 41.2,128.3 41.6,129.7 42.0,126.7 42.4,116.2 42.8,117.1 43.2,128.6 43.6,130.0 44.0,131.1 44.4,131.6 44.8,129.4 45.2,129.9 45.6,131.0 46.0,129.2 46.4,130.4 46.8,131.8 47.2,131.7 47.6,131.5 48.0,129.7 48.4,132.8 48.8,128.9 49.2,124.4 49.6,126.5 50.0,129.3 50.4,130.7 50.8,131.0 51.2,133.7 51.6,131.6 52.0,132.2 52.4,132.3 52.8,133.1 53.2,133.1 53.6,133.1 54.0,131.9 54.4,130.5 54.8,133.3 55.2,133.5 55.6,134.4 56.0,133.5 56.4,133.2 56.8,134.1 57.2,132.6 57.6,133.1 58.0,133.3 58.4,134.5 58.8,136.0 59.2,134.9 59.6,134.8 60.0,132.8 60.4,130.6 60.8,126.8 61.2,123.4 61.6,112.5 62.0,92.8 62.4,95.8 62.8,123.2 63.2,133.4 63.6,135.9 64.0,136.9 64.4,135.5 64.8,136.9 65.2,137.8 65.6,136.1 66.0,137.2 66.4,136.2 66.8,135.0 67.2,136.7 67.6,135.9 68.0,136.9 68.4,136.4 68.8,137.2 69.2,135.1 69.6,139.0 70.0,138.5 70.4,137.0 70.8,136.6 71.2,137.5 71.6,138.3 72.0,138.1 72.4,138.2 72.8,136.1 73.2,137.0 73.6,139.3 74.0,138.2 74.4,135.8 74.8,134.9 75.2,134.5 75.6,136.5 76.0,139.6 76.4,138.5 76.8,139.9 77.2,139.1 77.6,137.6 78.0,138.5 78.4,141.4 78.8,138.5 79.2,138.3 79.6,140.6 80.0,139.6 80.4,139.6 80.8,141.1 81.2,138.1 81.6,140.3 82.0,138.9 82.4,138.6 82.8,139.3 83.2,141.3 83.6,140.1 84.0,138.5 84.4,139.3 84.8,142.0 85.2,141.6 85.6,139.6 86.0,143.2 86.4,140.4 86.8,139.7 87.2,140.8 87.6,142.0 88.0,142.8 88.4,142.2 88.8,140.8 89.2,140.8 89.6,139.9 90.0,141.4 90.4,140.9 90.8,141.9 91.2,140.4 91.6,141.2 92.0,140.9 92.4,140.6 92.8,140.7 93.2,141.0 93.6,140.9 94.0,142.8 94.4,142.3 94.8,140.9 95.2,142.9 95.6,142.7 96.0,144.0 96.4,142.3 96.8,142.4 97.2,141.9 97.6,142.9 98.0,143.3 98.4,143.0 98.8,142.6 99.2,143.6 99.6,143.1 100.0,143.4 100.4,142.1 100.8,143.4 101.2,142.2 101.6,142.4 102.0,143.5 102.4,145.7 102.8,144.6 103.2,143.5 103.6,143.4 104.0,144.7 104.4,144.4 104.8,139.3 105.2,135.0 105.6,141.4 106.0,143.3 106.4,143.6 106.8,143.0 107.2,143.7 107.6,141.6 108.0,142.8 108.4,144.6 108.8,143.1 109.2,144.9 109.6,142.8 110.0,143.9 110.4,144.8 110.8,143.2 111.2,143.6 111.6,147.3 112.0,143.7 112.4,143.8 112.8,143.9 113.2,144.7 113.6,144.6 114.0,145.9 114.4,145.7 114.8,144.3 115.2,144.4 115.6,143.2 116.0,143.1 116.4,144.0 116.8,145.8 117.2,145.1 117.6,146.0 118.0,146.2 118.4,144.9 118.8,147.6 119.2,144.5 119.6,144.4 120.0,144.7 120.4,146.6 120.8,145.1 121.2,144.4 121.6,145.8 122.0,146.7 122.4,145.2 122.8,145.0 123.2,146.7 123.6,146.6 124.0,146.5 124.4,144.3 124.8,143.3 125.2,134.4 125.6,120.9 126.0,129.0 126.4,139.7 126.8,144.3 127.2,148.3 127.6,145.7 128.0,144.6 128.4,145.5 128.8,146.3 129.2,146.6 129.6,145.5 130.0,144.5 130.4,144.7 130.8,144.6 131.2,144.3 131.6,145.4 132.0,142.3 132.4,132.4 132.8,126.3 133.2,137.5 133.6,144.6 134.0,145.1 134.4,147.1 134.8,144.4 135.2,145.9 135.6,145.5 136.0,143.9 136.4,146.5 136.8,145.8 137.2,142.9 137.6,146.3 138.0,146.8 138.4,144.5 138.8,147.7 139.2,145.7 139.6,144.0 140.0,146.2 140.4,145.0 140.8,143.7 141.2,141.8 141.6,137.1 142.0,125.4 142.4,137.6 142.8,145.1 143.2,144.7 143.6,144.6 144.0,147.7 144.4,147.6 144.8,146.3 145.2,144.8 145.6,143.9 146.0,144.7 146.4,147.4 146.8,145.8 147.2,144.7 147.6,143.4 148.0,145.3 148.4,143.8 148.8,145.0 149.2,146.0 149.6,146.4 150.0,145.1 150.4,144.4 150.8,145.1 151.2,147.2 151.6,145.2 152.0,142.8 152.4,146.8 152.8,145.0 153.2,149.4 153.6,143.9 154.0,144.3 154.4,144.0 154.8,144.9 155.2,143.5 155.6,142.2 156.0,141.6 156.4,144.0 156.8,143.4 157.2,143.3 157.6,146.8 158.0,144.2 158.4,141.7 158.8,133.1 159.2,125.9 159.6,120.6 160.0,123.2 160.4,130.4 160.8,133.6 161.2,133.6 161.6,133.6 162.0,132.9 162.4,136.5 162.8,140.7 163.2,141.3 163.6,141.5 164.0,143.4 164.4,141.6 164.8,141.9 165.2,144.1 165.6,142.2 166.0,144.7 166.4,143.3 166.8,143.7 167.2,144.1 167.6,139.2 168.0,142.1 168.4,140.3 168.8,141.4 169.2,141.8 169.6,143.7 170.0,141.8 170.4,144.1 170.8,140.8 171.2,140.9 171.6,137.9 172.0,135.8 172.4,137.5 172.8,139.7 173.2,140.6 173.6,138.9 174.0,142.8 174.4,141.9 174.8,141.3 175.2,140.9 175.6,139.0 176.0,135.9 176.4,125.4 176.8,101.2 177.2,87.9 177.6,100.5 178.0,114.8 178.4,117.5 178.8,121.1 179.2,128.3 179.6,137.3"/>
<path d="M12.2 3.5V184.29999999999995H181.6" stroke="#333" stroke-width="1" fill="none"/>
<path d="M12.2 29.40h-5.4" stroke="#444" stroke-width="0.9"/>
<path d="M12.2 59.34h-5" stroke="#b0b0b0" stroke-width="0.8"/>
<path d="M12.2 50.61h-5" stroke="#b0b0b0" stroke-width="0.8"/>
<path d="M12.2 45.35h-5" stroke="#b0b0b0" stroke-width="0.8"/>
<path d="M12.2 41.57h-5" stroke="#b0b0b0" stroke-width="0.8"/>
<path d="M12.2 38.63h-5" stroke="#b0b0b0" stroke-width="0.8"/>
<path d="M12.2 36.21h-5" stroke="#b0b0b0" stroke-width="0.8"/>
<path d="M12.2 34.16h-5" stroke="#b0b0b0" stroke-width="0.8"/>
<path d="M12.2 32.38h-5" stroke="#b0b0b0" stroke-width="0.8"/>
<path d="M12.2 30.81h-5" stroke="#b0b0b0" stroke-width="0.8"/>
<path d="M12.2 91.60h-5.4" stroke="#444" stroke-width="0.9"/>
<path d="M12.2 121.54h-5" stroke="#b0b0b0" stroke-width="0.8"/>
<path d="M12.2 112.81h-5" stroke="#b0b0b0" stroke-width="0.8"/>
<path d="M12.2 107.55h-5" stroke="#b0b0b0" stroke-width="0.8"/>
<path d="M12.2 103.77h-5" stroke="#b0b0b0" stroke-width="0.8"/>
<path d="M12.2 100.83h-5" stroke="#b0b0b0" stroke-width="0.8"/>
<path d="M12.2 98.41h-5" stroke="#b0b0b0" stroke-width="0.8"/>
<path d="M12.2 96.36h-5" stroke="#b0b0b0" stroke-width="0.8"/>
<path d="M12.2 94.58h-5" stroke="#b0b0b0" stroke-width="0.8"/>
<path d="M12.2 93.01h-5" stroke="#b0b0b0" stroke-width="0.8"/>
<path d="M12.2 153.80h-5.4" stroke="#444" stroke-width="0.9"/>
<path d="M12.2 175.01h-5" stroke="#b0b0b0" stroke-width="0.8"/>
<path d="M12.2 169.75h-5" stroke="#b0b0b0" stroke-width="0.8"/>
<path d="M12.2 165.97h-5" stroke="#b0b0b0" stroke-width="0.8"/>
<path d="M12.2 163.03h-5" stroke="#b0b0b0" stroke-width="0.8"/>
<path d="M12.2 160.61h-5" stroke="#b0b0b0" stroke-width="0.8"/>
<path d="M12.2 158.56h-5" stroke="#b0b0b0" stroke-width="0.8"/>
<path d="M12.2 156.78h-5" stroke="#b0b0b0" stroke-width="0.8"/>
<path d="M12.2 155.21h-5" stroke="#b0b0b0" stroke-width="0.8"/>
<path d="M31.68 184.29999999999995v2.4" stroke="#888" stroke-width="0.8"/>
<path d="M53.04 184.29999999999995v2.4" stroke="#888" stroke-width="0.8"/>
<path d="M74.40 184.29999999999995v4.5" stroke="#333" stroke-width="0.8"/>
<path d="M95.76 184.29999999999995v2.4" stroke="#888" stroke-width="0.8"/>
<path d="M117.12 184.29999999999995v2.4" stroke="#888" stroke-width="0.8"/>
<path d="M138.48 184.29999999999995v2.4" stroke="#888" stroke-width="0.8"/>
<path d="M159.84 184.29999999999995v2.4" stroke="#888" stroke-width="0.8"/>
<path d="M181.20 184.29999999999995v4.5" stroke="#333" stroke-width="0.8"/>
<rect x="96.8" y="13.3" width="74.9" height="19.8" fill="#fff" stroke="#b0b0b0" stroke-width="0.7"/>
<path d="M99.8 18.8h15" stroke="#f47c7c" stroke-width="0.7"/></svg>
<span class="t" style="font-size:8.4px;color:#1c9ad6;font-weight:700;letter-spacing:-0.138px;left:499.00px;top:366.79px;">Scan No. : 26 - Converted data</span>
<span class="t" style="font-size:6.6px;color:#333;letter-spacing:0.073px;left:578.40px;top:388.41px;">Scan No. : 26 -</span>
<span class="t" style="font-size:6.6px;color:#333;letter-spacing:0.185px;left:578.40px;top:397.51px;">Converted data</span>
<span class="t" style="font-size:6.4px;color:#555;left:449.70px;top:398.18px;">1·10</span>
<span class="t" style="font-size:5.8px;color:#555;left:462.90px;top:395.79px;">6</span>
<span class="t" style="font-size:6.4px;color:#555;left:449.70px;top:460.38px;">1·10</span>
<span class="t" style="font-size:5.8px;color:#555;left:462.90px;top:457.99px;">4</span>
<span class="t" style="font-size:6.4px;color:#555;left:449.70px;top:522.58px;">1·10</span>
<span class="t" style="font-size:5.8px;color:#555;left:462.90px;top:520.19px;">2</span>
<span class="t" style="font-size:6.3px;color:#444;left:530.89px;top:563.97px;">50</span>
<span class="t" style="font-size:6.3px;color:#444;left:634.44px;top:563.97px;">100</span>
<span class="t" style="font-size:6.6px;color:#222;font-weight:700;letter-spacing:0.094px;left:538.65px;top:572.81px;">θ/2θ, °</span>
<span class="t" style="font-size:6.6px;color:#222;font-weight:700;left:442.90px;top:476.00px;transform:translate(-50%,-50%) rotate(-90deg);">Intensity, cps</span>
<svg style="left:682px;top:372px" width="200" height="200" viewBox="0 0 200 200"><rect x="12.0" y="3.5" width="170.0" height="180.8" fill="#fff" stroke="#c0c0c0" stroke-width="1"/>
<polyline fill="none" stroke="#f26a6a" stroke-width="0.62" stroke-linejoin="round" points="15.0,121.6 15.4,123.2 15.8,122.4 16.2,122.6 16.6,122.4 17.0,122.4 17.4,122.8 17.8,122.5 18.2,122.1 18.6,122.2 19.0,122.1 19.4,123.3 19.8,123.7 20.2,124.6 20.6,123.9 21.0,123.9 21.4,124.3 21.8,124.0 22.2,122.8 22.6,125.0 23.0,124.1 23.4,124.7 23.8,124.5 24.2,127.0 24.6,125.5 25.0,119.5 25.4,108.4 25.8,120.2 26.2,124.6 26.6,126.5 27.0,124.7 27.4,125.9 27.8,126.8 28.2,125.5 28.6,126.2 29.0,122.4 29.4,98.8 29.8,72.3 30.2,98.9 30.6,124.4 31.0,125.8 31.4,126.6 31.8,127.7 32.2,127.0 32.6,126.6 33.0,128.9 33.4,128.6 33.8,128.9 34.2,129.0 34.6,128.8 35.0,127.7 35.4,126.6 35.8,129.0 36.2,127.9 36.6,128.9 37.0,128.9 37.4,118.2 37.8,81.3 38.2,83.2 38.6,120.3 39.0,127.8 39.4,128.8 39.8,116.4 40.2,64.1 40.6,38.3 41.0,80.9 41.4,75.2 41.8,79.9 42.2,115.0 42.6,130.5 43.0,131.0 43.4,130.4 43.8,129.7 44.2,119.6 44.6,91.8 45.0,103.5 45.4,128.1 45.8,132.6 46.2,131.4 46.6,131.7 47.0,131.7 47.4,131.0 47.8,132.2 48.2,129.7 48.6,110.4 49.0,100.7 49.4,121.5 49.8,132.1 50.2,131.9 50.6,132.2 51.0,133.0 51.4,133.0 51.8,133.7 52.2,133.6 52.6,132.0 53.0,134.4 53.4,131.9 53.8,132.8 54.2,123.5 54.6,105.5 55.0,123.8 55.4,133.1 55.8,127.5 56.2,110.3 56.6,119.2 57.0,132.1 57.4,134.3 57.8,134.3 58.2,134.7 58.6,133.9 59.0,134.7 59.4,134.5 59.8,136.3 60.2,134.5 60.6,136.1 61.0,131.2 61.4,119.3 61.8,127.2 62.2,134.1 62.6,135.5 63.0,134.6 63.4,134.9 63.8,135.1 64.2,135.8 64.6,136.7 65.0,136.6 65.4,131.7 65.8,110.4 66.2,85.7 66.6,111.0 67.0,132.3 67.4,135.2 67.8,135.7 68.2,137.1 68.6,136.7 69.0,137.2 69.4,134.9 69.8,131.9 70.2,131.6 70.6,134.1 71.0,136.8 71.4,137.0 71.8,136.6 72.2,138.1 72.6,139.3 73.0,136.4 73.4,130.9 73.8,131.6 74.2,136.5 74.6,137.1 75.0,138.0 75.4,139.2 75.8,138.0 76.2,136.6 76.6,139.6 77.0,138.3 77.4,139.7 77.8,135.2 78.2,116.6 78.6,83.2 79.0,114.2 79.4,134.1 79.8,112.6 80.2,114.6 80.6,134.0 81.0,140.7 81.4,139.8 81.8,138.1 82.2,137.3 82.6,137.3 83.0,137.1 83.4,113.1 83.8,83.8 84.2,113.5 84.6,135.3 85.0,141.6 85.4,139.8 85.8,130.9 86.2,117.4 86.6,133.2 87.0,140.5 87.4,138.6 87.8,141.1 88.2,129.0 88.6,106.6 89.0,115.8 89.4,136.4 89.8,141.2 90.2,139.1 90.6,140.6 91.0,140.9 91.4,138.0 91.8,135.5 92.2,134.7 92.6,138.8 93.0,141.9 93.4,142.5 93.8,142.4 94.2,140.9 94.6,142.1 95.0,141.6 95.4,140.0 95.8,140.9 96.2,143.7 96.6,140.5 97.0,142.0 97.4,142.5 97.8,124.6 98.2,87.4 98.6,104.3 99.0,137.3 99.4,140.2 99.8,142.4 100.2,140.9 100.6,142.4 101.0,140.0 101.4,140.8 101.8,143.2 102.2,142.9 102.6,138.6 103.0,144.0 103.4,139.7 103.8,137.5 104.2,137.7 104.6,140.6 105.0,142.0 105.4,140.2 105.8,143.2 106.2,145.0 106.6,141.2 107.0,144.1 107.4,142.4 107.8,139.0 108.2,136.5 108.6,141.4 109.0,143.3 109.4,145.2 109.8,142.0 110.2,142.5 110.6,142.3 111.0,144.4 111.4,141.3 111.8,143.1 112.2,141.8 112.6,143.1 113.0,144.5 113.4,142.9 113.8,144.5 114.2,143.1 114.6,143.6 115.0,141.1 115.4,124.7 115.8,117.7 116.2,136.6 116.6,142.4 117.0,144.9 117.4,144.2 117.8,143.5 118.2,144.2 118.6,142.0 119.0,123.0 119.4,104.2 119.8,122.5 120.2,141.4 120.6,142.3 121.0,143.7 121.4,144.5 121.8,132.9 122.2,93.8 122.6,62.9 123.0,92.6 123.4,110.3 123.8,81.6 124.2,100.3 124.6,139.1 125.0,144.3 125.4,145.7 125.8,145.8 126.2,144.3 126.6,145.5 127.0,145.1 127.4,144.6 127.8,146.5 128.2,144.0 128.6,144.2 129.0,144.3 129.4,146.9 129.8,144.6 130.2,147.8 130.6,143.5 131.0,143.7 131.4,138.5 131.8,135.6 132.2,139.4 132.6,145.3 133.0,144.2 133.4,144.9 133.8,147.6 134.2,144.4 134.6,141.7 135.0,138.7 135.4,140.2 135.8,146.9 136.2,145.6 136.6,147.0 137.0,145.5 137.4,146.4 137.8,147.7 138.2,146.4 138.6,143.5 139.0,145.7 139.4,145.6 139.8,145.6 140.2,141.5 140.6,127.8 141.0,137.9 141.4,143.6 141.8,148.2 142.2,145.9 142.6,145.9 143.0,146.3 143.4,146.0 143.8,147.3 144.2,148.3 144.6,149.2 145.0,149.3 145.4,144.2 145.8,142.9 146.2,138.4 146.6,141.9 147.0,146.5 147.4,146.8 147.8,145.2 148.2,145.6 148.6,148.3 149.0,146.8 149.4,149.0 149.8,146.3 150.2,146.2 150.6,147.2 151.0,147.2 151.4,146.8 151.8,130.2 152.2,106.1 152.6,116.6 153.0,134.5 153.4,127.9 153.8,128.3 154.2,143.6 154.6,148.8 155.0,148.4 155.4,146.6 155.8,148.5 156.2,147.7 156.6,146.6 157.0,148.7 157.4,146.4 157.8,147.1 158.2,146.0 158.6,145.5 159.0,148.2 159.4,145.2 159.8,146.2 160.2,138.4 160.6,105.2 161.0,87.2 161.4,126.1 161.8,144.1 162.2,146.5 162.6,144.6 163.0,125.4 163.4,98.8 163.8,123.8 164.2,137.7 164.6,114.7 165.0,130.3 165.4,144.8 165.8,148.6 166.2,146.7 166.6,149.5 167.0,147.9 167.4,147.3 167.8,150.0 168.2,150.6 168.6,150.7 169.0,149.8 169.4,148.4 169.8,147.2 170.2,147.6 170.6,147.5 171.0,149.0 171.4,145.6 171.8,141.1 172.2,141.1 172.6,146.2 173.0,147.3 173.4,146.7 173.8,151.3 174.2,141.4 174.6,136.4 175.0,142.9 175.4,147.2 175.8,151.7 176.2,148.9 176.6,147.1 177.0,149.2 177.4,133.8 177.8,134.3 178.2,147.2 178.6,148.2 179.0,150.5 179.4,150.0"/>
<path d="M12.0 3.5V184.29999999999995H182.0" stroke="#333" stroke-width="1" fill="none"/>
<path d="M12.0 33.60h-5.4" stroke="#444" stroke-width="0.9"/>
<path d="M12.0 69.31h-5" stroke="#b0b0b0" stroke-width="0.8"/>
<path d="M12.0 58.90h-5" stroke="#b0b0b0" stroke-width="0.8"/>
<path d="M12.0 52.63h-5" stroke="#b0b0b0" stroke-width="0.8"/>
<path d="M12.0 48.12h-5" stroke="#b0b0b0" stroke-width="0.8"/>
<path d="M12.0 44.61h-5" stroke="#b0b0b0" stroke-width="0.8"/>
<path d="M12.0 41.72h-5" stroke="#b0b0b0" stroke-width="0.8"/>
<path d="M12.0 39.28h-5" stroke="#b0b0b0" stroke-width="0.8"/>
<path d="M12.0 37.16h-5" stroke="#b0b0b0" stroke-width="0.8"/>
<path d="M12.0 35.28h-5" stroke="#b0b0b0" stroke-width="0.8"/>
<path d="M12.0 107.80h-5.4" stroke="#444" stroke-width="0.9"/>
<path d="M12.0 143.51h-5" stroke="#b0b0b0" stroke-width="0.8"/>
<path d="M12.0 133.10h-5" stroke="#b0b0b0" stroke-width="0.8"/>
<path d="M12.0 126.83h-5" stroke="#b0b0b0" stroke-width="0.8"/>
<path d="M12.0 122.32h-5" stroke="#b0b0b0" stroke-width="0.8"/>
<path d="M12.0 118.81h-5" stroke="#b0b0b0" stroke-width="0.8"/>
<path d="M12.0 115.92h-5" stroke="#b0b0b0" stroke-width="0.8"/>
<path d="M12.0 113.48h-5" stroke="#b0b0b0" stroke-width="0.8"/>
<path d="M12.0 111.36h-5" stroke="#b0b0b0" stroke-width="0.8"/>
<path d="M12.0 109.48h-5" stroke="#b0b0b0" stroke-width="0.8"/>
<path d="M12.0 182.00h-5.4" stroke="#444" stroke-width="0.9"/>
<path d="M30.76 184.29999999999995v2.4" stroke="#888" stroke-width="0.8"/>
<path d="M52.18 184.29999999999995v2.4" stroke="#888" stroke-width="0.8"/>
<path d="M73.60 184.29999999999995v4.5" stroke="#333" stroke-width="0.8"/>
<path d="M95.02 184.29999999999995v2.4" stroke="#888" stroke-width="0.8"/>
<path d="M116.44 184.29999999999995v2.4" stroke="#888" stroke-width="0.8"/>
<path d="M137.86 184.29999999999995v2.4" stroke="#888" stroke-width="0.8"/>
<path d="M159.28 184.29999999999995v2.4" stroke="#888" stroke-width="0.8"/>
<path d="M180.70 184.29999999999995v4.5" stroke="#333" stroke-width="0.8"/>
<rect x="96.1" y="13.3" width="75.2" height="19.8" fill="#fff" stroke="#b0b0b0" stroke-width="0.7"/>
<path d="M99.1 18.8h15" stroke="#f47c7c" stroke-width="0.7"/></svg>
<span class="t" style="font-size:8.4px;color:#1c9ad6;font-weight:700;letter-spacing:-0.148px;left:720.55px;top:366.79px;">Scan No. : 27 - Converted data</span>
<span class="t" style="font-size:6.6px;color:#333;letter-spacing:0.073px;left:799.70px;top:388.41px;">Scan No. : 27 -</span>
<span class="t" style="font-size:6.6px;color:#333;letter-spacing:0.185px;left:799.70px;top:397.51px;">Converted data</span>
<span class="t" style="font-size:6.4px;color:#555;left:671.50px;top:402.38px;">1·10</span>
<span class="t" style="font-size:5.8px;color:#555;left:684.70px;top:399.99px;">6</span>
<span class="t" style="font-size:6.4px;color:#555;left:671.50px;top:476.58px;">1·10</span>
<span class="t" style="font-size:5.8px;color:#555;left:684.70px;top:474.19px;">4</span>
<span class="t" style="font-size:6.4px;color:#555;left:671.50px;top:550.78px;">1·10</span>
<span class="t" style="font-size:5.8px;color:#555;left:684.70px;top:548.39px;">2</span>
<span class="t" style="font-size:6.3px;color:#444;left:752.09px;top:563.97px;">50</span>
<span class="t" style="font-size:6.3px;color:#444;left:855.94px;top:563.97px;">100</span>
<span class="t" style="font-size:6.6px;color:#222;font-weight:700;letter-spacing:0.094px;left:760.75px;top:572.81px;">θ/2θ, °</span>
<span class="t" style="font-size:6.6px;color:#222;font-weight:700;left:664.90px;top:476.00px;transform:translate(-50%,-50%) rotate(-90deg);">Intensity, cps</span>
<div style="left:566.9px;top:587px;width:27.6px;height:16.8px;box-sizing:border-box;background:#f2f2f2;border:1px solid #dedede;"><svg style="left:-1px;top:-1px;opacity:0.5" width="27.6" height="16.8" viewBox="0 0 27.6 16.8"><path d="M14.55 4.90L9.15 8.80L14.55 12.70" fill="none" stroke="url(#gb)" stroke-width="2.5" stroke-linecap="round" stroke-linejoin="miter"/><path d="M14.55 4.60L10.35 7.90" fill="none" stroke="#9cc8ff" stroke-width="0.7" stroke-linecap="round" opacity="0.9"/><path d="M19.85 4.90L14.45 8.80L19.85 12.70" fill="none" stroke="url(#gb)" stroke-width="2.5" stroke-linecap="round" stroke-linejoin="miter"/><path d="M19.85 4.60L15.65 7.90" fill="none" stroke="#9cc8ff" stroke-width="0.7" stroke-linecap="round" opacity="0.9"/></svg></div>
<div style="left:600.7px;top:587px;width:27.6px;height:16.8px;box-sizing:border-box;background:#f2f2f2;border:1px solid #dedede;"><svg style="left:-1px;top:-1px;opacity:0.5" width="27.6" height="16.8" viewBox="0 0 27.6 16.8"><path d="M17.20 4.90L11.80 8.80L17.20 12.70" fill="none" stroke="url(#gb)" stroke-width="2.5" stroke-linecap="round" stroke-linejoin="miter"/><path d="M17.20 4.60L13.00 7.90" fill="none" stroke="#9cc8ff" stroke-width="0.7" stroke-linecap="round" opacity="0.9"/></svg></div>
<div style="left:667.2px;top:587px;width:27.6px;height:16.8px;box-sizing:border-box;background:#ededed;border:1px solid #cfcfcf;"><svg style="left:-1px;top:-1px;opacity:1" width="27.6" height="16.8" viewBox="0 0 27.6 16.8"><path d="M10.40 4.90L15.80 8.80L10.40 12.70" fill="none" stroke="url(#gb)" stroke-width="2.5" stroke-linecap="round" stroke-linejoin="miter"/><path d="M10.40 4.60L14.60 7.90" fill="none" stroke="#9cc8ff" stroke-width="0.7" stroke-linecap="round" opacity="0.9"/></svg></div>
<div style="left:701.1px;top:587px;width:27.6px;height:16.8px;box-sizing:border-box;background:#ededed;border:1px solid #cfcfcf;"><svg style="left:-1px;top:-1px;opacity:1" width="27.6" height="16.8" viewBox="0 0 27.6 16.8"><path d="M13.05 4.90L18.45 8.80L13.05 12.70" fill="none" stroke="url(#gb)" stroke-width="2.5" stroke-linecap="round" stroke-linejoin="miter"/><path d="M13.05 4.60L17.25 7.90" fill="none" stroke="#9cc8ff" stroke-width="0.7" stroke-linecap="round" opacity="0.9"/><path d="M7.75 4.90L13.15 8.80L7.75 12.70" fill="none" stroke="url(#gb)" stroke-width="2.5" stroke-linecap="round" stroke-linejoin="miter"/><path d="M7.75 4.60L11.95 7.90" fill="none" stroke="#9cc8ff" stroke-width="0.7" stroke-linecap="round" opacity="0.9"/></svg></div>
<div style="left:637.4px;top:587.6px;width:10.2px;height:14.6px;background:#fff;border:1px solid #d6d6d6;box-sizing:border-box;"></div>
<span class="t" style="font-size:7.8px;color:#444;left:640.43px;top:592.30px;">1</span>
<span class="t" style="font-size:7.8px;color:#444;left:649.20px;top:592.30px;">/4</span>
</div>
<div class="panel panel-peak-list" style="left:0;top:0">
<div style="left:871px;top:54px;width:4px;height:553px;background:#fbfbfb;"></div>
<div style="left:875px;top:54px;width:280px;height:553px;background:#fff;border:1px solid #d8d8d8;box-sizing:border-box;border-bottom:none;"></div>
<span class="t" style="font-size:10px;color:#b9b9b9;letter-spacing:-0.468px;left:893.00px;top:59.83px;">Peak List</span>
<span class="t" style="font-size:6.6px;color:#4a5a96;left:1129.90px;top:61.51px;">?</span><svg style="left:1140.7px;top:60.199999999999996px" width="6" height="7" viewBox="0 0 6 7"><path d="M1.8 0.4h2.4v2.6h-2.4z" fill="#6a6a6a"/><path d="M0.9 3.3h4.2" stroke="#555" stroke-width="0.9"/><path d="M3 3.6v2.6" stroke="#666" stroke-width="0.7"/></svg>
<span class="t" style="font-size:8.2px;color:#333;letter-spacing:-0.233px;left:878.60px;top:80.36px;">2θ Peak List</span>
<div style="left:1127.5px;top:76.7px;width:23px;height:13.6px;background:#efefef;border:1px solid #c6c6c6;box-sizing:border-box;"></div>
<svg style="left:1133.6px;top:79.2px" width="11" height="9" viewBox="0 0 11 9"><path d="M1 0.6l8.6 7.8M9.6 0.6l-8.6 7.8" stroke="#e03c3c" stroke-width="0.9"/></svg>
<div style="left:878px;top:96.8px;width:272.20000000000005px;height:492.99999999999994px;background:#fff;border:1px solid #e2e3e5;box-sizing:border-box;"></div>
<span class="t" style="font-size:6.8px;color:#666;left:905.82px;top:101.54px;">Scan No.</span>
<span class="t" style="font-size:6.8px;color:#666;left:952.90px;top:101.54px;">Time, min</span>
<span class="t" style="font-size:6.8px;color:#666;left:1004.78px;top:101.54px;">X, mm</span>
<span class="t" style="font-size:6.8px;color:#666;left:1051.77px;top:101.54px;">Y, mm</span>
<span class="t" style="font-size:6.8px;color:#666;left:1093.76px;top:101.54px;">File Name</span>
<div style="left:878px;top:110.0px;width:272.20000000000005px;height:1px;background:#e2e3e5;"></div>
<span class="t" style="font-size:6.8px;color:#444;left:900.40px;top:114.34px;">11</span>
<span class="t" style="font-size:6.8px;color:#444;left:947.00px;top:114.34px;">197.78</span>
<span class="t" style="font-size:6.8px;color:#444;left:994.00px;top:114.34px;">-1.5555</span>
<span class="t" style="font-size:6.8px;color:#444;left:1040.80px;top:114.34px;">2.8630</span>
<span class="t" style="font-size:6.8px;color:#444;letter-spacing:-0.087px;left:1087.60px;top:114.34px;">tt_col0.05VS...</span>
<svg style="left:890.4px;top:114.0px" width="6" height="6" viewBox="0 0 6 6"><rect x="0.4" y="0.4" width="5" height="5" fill="#fff" stroke="#6a6a6a" stroke-width="0.7"/><path d="M0.8 2.9h4.2M2.9 0.8v4.2" stroke="#555" stroke-width="0.7"/></svg>
<div style="left:878px;top:122.0px;width:261.9000000000001px;height:1px;background:#e2e3e5;"></div>
<span class="t" style="font-size:6.8px;color:#444;left:900.40px;top:126.69px;">12</span>
<span class="t" style="font-size:6.8px;color:#444;left:947.00px;top:126.69px;">217.58</span>
<span class="t" style="font-size:6.8px;color:#444;left:994.00px;top:126.69px;">-1.4555</span>
<span class="t" style="font-size:6.8px;color:#444;left:1040.80px;top:126.69px;">2.8630</span>
<span class="t" style="font-size:6.8px;color:#444;letter-spacing:-0.087px;left:1087.60px;top:126.69px;">tt_col0.05VS...</span>
<svg style="left:890.4px;top:126.3px" width="6" height="6" viewBox="0 0 6 6"><rect x="0.4" y="0.4" width="5" height="5" fill="#fff" stroke="#6a6a6a" stroke-width="0.7"/><path d="M0.8 2.9h4.2M2.9 0.8v4.2" stroke="#555" stroke-width="0.7"/></svg>
<div style="left:878px;top:134.5px;width:261.9000000000001px;height:1px;background:#e2e3e5;"></div>
<span class="t" style="font-size:6.8px;color:#444;left:900.40px;top:139.04px;">13</span>
<span class="t" style="font-size:6.8px;color:#444;left:947.00px;top:139.04px;">237.37</span>
<span class="t" style="font-size:6.8px;color:#444;left:994.00px;top:139.04px;">-1.3555</span>
<span class="t" style="font-size:6.8px;color:#444;left:1040.80px;top:139.04px;">2.8630</span>
<span class="t" style="font-size:6.8px;color:#444;letter-spacing:-0.087px;left:1087.60px;top:139.04px;">tt_col0.05VS...</span>
<svg style="left:890.4px;top:138.7px" width="6" height="6" viewBox="0 0 6 6"><rect x="0.4" y="0.4" width="5" height="5" fill="#fff" stroke="#6a6a6a" stroke-width="0.7"/><path d="M0.8 2.9h4.2M2.9 0.8v4.2" stroke="#555" stroke-width="0.7"/></svg>
<div style="left:878px;top:147.0px;width:261.9000000000001px;height:1px;background:#e2e3e5;"></div>
<span class="t" style="font-size:6.8px;color:#444;left:900.40px;top:151.39px;">19</span>
<span class="t" style="font-size:6.8px;color:#444;left:947.00px;top:151.39px;">356.17</span>
<span class="t" style="font-size:6.8px;color:#444;left:994.00px;top:151.39px;">-1.5555</span>
<span class="t" style="font-size:6.8px;color:#444;left:1040.80px;top:151.39px;">2.9630</span>
<span class="t" style="font-size:6.8px;color:#444;letter-spacing:-0.087px;left:1087.60px;top:151.39px;">tt_col0.05VS...</span>
<svg style="left:890.4px;top:151.0px" width="6" height="6" viewBox="0 0 6 6"><rect x="0.4" y="0.4" width="5" height="5" fill="#fff" stroke="#6a6a6a" stroke-width="0.7"/><path d="M0.8 2.9h4.2M2.9 0.8v4.2" stroke="#555" stroke-width="0.7"/></svg>
<div style="left:878px;top:159.0px;width:261.9000000000001px;height:1px;background:#e2e3e5;"></div>
<span class="t" style="font-size:6.8px;color:#444;left:900.40px;top:163.74px;">20</span>
<span class="t" style="font-size:6.8px;color:#444;left:947.00px;top:163.74px;">375.97</span>
<span class="t" style="font-size:6.8px;color:#444;left:994.00px;top:163.74px;">-1.4555</span>
<span class="t" style="font-size:6.8px;color:#444;left:1040.80px;top:163.74px;">2.9630</span>
<span class="t" style="font-size:6.8px;color:#444;letter-spacing:-0.087px;left:1087.60px;top:163.74px;">tt_col0.05VS...</span>
<svg style="left:890.4px;top:163.4px" width="6" height="6" viewBox="0 0 6 6"><rect x="0.4" y="0.4" width="5" height="5" fill="#fff" stroke="#6a6a6a" stroke-width="0.7"/><path d="M0.8 2.9h4.2M2.9 0.8v4.2" stroke="#555" stroke-width="0.7"/></svg>
<div style="left:878px;top:171.5px;width:261.9000000000001px;height:1px;background:#e2e3e5;"></div>
<span class="t" style="font-size:6.8px;color:#444;left:900.40px;top:176.09px;">21</span>
<span class="t" style="font-size:6.8px;color:#444;left:947.00px;top:176.09px;">395.78</span>
<span class="t" style="font-size:6.8px;color:#444;left:994.00px;top:176.09px;">-1.3555</span>
<span class="t" style="font-size:6.8px;color:#444;left:1040.80px;top:176.09px;">2.9630</span>
<span class="t" style="font-size:6.8px;color:#444;letter-spacing:-0.087px;left:1087.60px;top:176.09px;">tt_col0.05VS...</span>
<svg style="left:890.4px;top:175.7px" width="6" height="6" viewBox="0 0 6 6"><rect x="0.4" y="0.4" width="5" height="5" fill="#fff" stroke="#6a6a6a" stroke-width="0.7"/><path d="M0.8 2.9h4.2M2.9 0.8v4.2" stroke="#555" stroke-width="0.7"/></svg>
<div style="left:878px;top:184.0px;width:261.9000000000001px;height:1px;background:#e2e3e5;"></div>
<span class="t" style="font-size:6.8px;color:#444;left:900.40px;top:188.44px;">27</span>
<span class="t" style="font-size:6.8px;color:#444;left:947.00px;top:188.44px;">514.60</span>
<span class="t" style="font-size:6.8px;color:#444;left:994.00px;top:188.44px;">-1.5555</span>
<span class="t" style="font-size:6.8px;color:#444;left:1040.80px;top:188.44px;">3.0630</span>
<span class="t" style="font-size:6.8px;color:#444;letter-spacing:-0.087px;left:1087.60px;top:188.44px;">tt_col0.05VS...</span>
<svg style="left:890.4px;top:188.1px" width="6" height="6" viewBox="0 0 6 6"><rect x="0.4" y="0.4" width="5" height="5" fill="#fff" stroke="#6a6a6a" stroke-width="0.7"/><path d="M0.8 2.9h4.2M2.9 0.8v4.2" stroke="#555" stroke-width="0.7"/></svg>
<div style="left:878px;top:196.0px;width:261.9000000000001px;height:1px;background:#e2e3e5;"></div>
<span class="t" style="font-size:6.8px;color:#444;left:900.40px;top:200.79px;">28</span>
<span class="t" style="font-size:6.8px;color:#444;left:947.00px;top:200.79px;">534.40</span>
<span class="t" style="font-size:6.8px;color:#444;left:994.00px;top:200.79px;">-1.4555</span>
<span class="t" style="font-size:6.8px;color:#444;left:1040.80px;top:200.79px;">3.0630</span>
<span class="t" style="font-size:6.8px;color:#444;letter-spacing:-0.087px;left:1087.60px;top:200.79px;">tt_col0.05VS...</span>
<svg style="left:890.4px;top:200.4px" width="6" height="6" viewBox="0 0 6 6"><rect x="0.4" y="0.4" width="5" height="5" fill="#fff" stroke="#6a6a6a" stroke-width="0.7"/><path d="M0.8 2.9h4.2M2.9 0.8v4.2" stroke="#555" stroke-width="0.7"/></svg>
<div style="left:878px;top:208.5px;width:261.9000000000001px;height:1px;background:#e2e3e5;"></div>
<span class="t" style="font-size:6.8px;color:#444;left:900.40px;top:213.14px;">29</span>
<span class="t" style="font-size:6.8px;color:#444;left:947.00px;top:213.14px;">554.17</span>
<span class="t" style="font-size:6.8px;color:#444;left:994.00px;top:213.14px;">-1.3555</span>
<span class="t" style="font-size:6.8px;color:#444;left:1040.80px;top:213.14px;">3.0630</span>
<span class="t" style="font-size:6.8px;color:#444;letter-spacing:-0.087px;left:1087.60px;top:213.14px;">tt_col0.05VS...</span>
<svg style="left:890.4px;top:212.8px" width="6" height="6" viewBox="0 0 6 6"><rect x="0.4" y="0.4" width="5" height="5" fill="#fff" stroke="#6a6a6a" stroke-width="0.7"/><path d="M0.8 2.9h4.2M2.9 0.8v4.2" stroke="#555" stroke-width="0.7"/></svg>
<div style="left:878px;top:221.0px;width:261.9000000000001px;height:1px;background:#e2e3e5;"></div>
<span class="t" style="font-size:6.8px;color:#444;left:900.40px;top:225.49px;">30</span>
<span class="t" style="font-size:6.8px;color:#444;left:947.00px;top:225.49px;">573.95</span>
<span class="t" style="font-size:6.8px;color:#444;left:994.00px;top:225.49px;">-1.2555</span>
<span class="t" style="font-size:6.8px;color:#444;left:1040.80px;top:225.49px;">3.0630</span>
<span class="t" style="font-size:6.8px;color:#444;letter-spacing:-0.087px;left:1087.60px;top:225.49px;">tt_col0.05VS...</span>
<svg style="left:890.4px;top:225.1px" width="6" height="6" viewBox="0 0 6 6"><rect x="0.4" y="0.4" width="5" height="5" fill="#fff" stroke="#6a6a6a" stroke-width="0.7"/><path d="M0.8 2.9h4.2M2.9 0.8v4.2" stroke="#555" stroke-width="0.7"/></svg>
<div style="left:878px;top:233.5px;width:261.9000000000001px;height:1px;background:#e2e3e5;"></div>
<span class="t" style="font-size:6.8px;color:#444;left:900.40px;top:237.84px;">31</span>
<span class="t" style="font-size:6.8px;color:#444;left:947.00px;top:237.84px;">593.75</span>
<span class="t" style="font-size:6.8px;color:#444;left:994.00px;top:237.84px;">-1.1555</span>
<span class="t" style="font-size:6.8px;color:#444;left:1040.80px;top:237.84px;">3.0630</span>
<span class="t" style="font-size:6.8px;color:#444;letter-spacing:-0.087px;left:1087.60px;top:237.84px;">tt_col0.05VS...</span>
<svg style="left:890.4px;top:237.5px" width="6" height="6" viewBox="0 0 6 6"><rect x="0.4" y="0.4" width="5" height="5" fill="#fff" stroke="#6a6a6a" stroke-width="0.7"/><path d="M0.8 2.9h4.2M2.9 0.8v4.2" stroke="#555" stroke-width="0.7"/></svg>
<div style="left:878px;top:245.5px;width:261.9000000000001px;height:1px;background:#e2e3e5;"></div>
<div style="left:944.4px;top:246.14999999999995px;width:195.5000000000001px;height:12.35px;background:#b5d7f1;"></div>
<div style="left:888.7px;top:246.14999999999995px;width:55.69999999999993px;height:12.35px;background:#ececec;"></div>
<span class="t" style="font-size:6.8px;color:#444;left:900.40px;top:250.19px;">32</span>
<span class="t" style="font-size:6.8px;color:#444;left:947.00px;top:250.19px;">613.57</span>
<span class="t" style="font-size:6.8px;color:#444;left:994.00px;top:250.19px;">-1.0555</span>
<span class="t" style="font-size:6.8px;color:#444;left:1040.80px;top:250.19px;">3.0630</span>
<span class="t" style="font-size:6.8px;color:#444;letter-spacing:-0.087px;left:1087.60px;top:250.19px;">tt_col0.05VS...</span>
<svg style="left:890.4px;top:249.8px" width="6" height="6" viewBox="0 0 6 6"><rect x="0.4" y="0.4" width="5" height="5" fill="#dbe9f6" stroke="#6a6a6a" stroke-width="0.7"/><path d="M0.8 2.9h4.2" stroke="#555" stroke-width="0.7"/></svg>
<div style="left:878px;top:258.0px;width:261.9000000000001px;height:1px;background:#e2e3e5;"></div>
<svg style="left:881.6px;top:249.7px" width="4" height="6" viewBox="0 0 4 6"><path d="M0.5 0.6l2.6 2.4l-2.6 2.4z" fill="#444"/></svg>
<div style="left:897.8px;top:258.49999999999994px;width:242.10000000000014px;height:13.5px;background:#f3f5f8;"></div>
<span class="t" style="font-size:6.8px;color:#666;left:907.12px;top:262.54px;">Peak No.</span>
<span class="t" style="font-size:6.8px;color:#666;left:951.80px;top:262.54px;">Location, °</span>
<span class="t" style="font-size:6.8px;color:#666;left:997.79px;top:262.54px;">Height, cps</span>
<span class="t" style="font-size:6.8px;color:#666;left:1047.53px;top:262.54px;">FWHM, °</span>
<span class="t" style="font-size:6.8px;color:#666;left:1088.49px;top:262.54px;">Int. Intensit...</span>
<span class="t" style="font-size:6.8px;color:#888;left:1134.60px;top:262.54px;">I</span>
<div style="left:897.8px;top:271.99999999999994px;width:233.60000000000014px;height:12.0px;background:#eef2f6;"></div>
<div style="left:897.8px;top:271.5px;width:242.10000000000014px;height:1px;background:#e2e3e5;"></div>
<span class="t" style="font-size:6.8px;color:#333;left:900.40px;top:275.44px;">Peak 1</span>
<span class="t" style="font-size:6.8px;color:#333;left:947.00px;top:275.44px;">29.57600</span>
<span class="t" style="font-size:6.8px;color:#333;letter-spacing:-0.010px;left:994.00px;top:275.44px;">14249.32780</span>
<span class="t" style="font-size:6.8px;color:#333;left:1040.80px;top:275.44px;">0.13198</span>
<span class="t" style="font-size:6.8px;color:#333;left:1087.60px;top:275.44px;">1527.83</span>
<div style="left:878px;top:283.5px;width:261.9000000000001px;height:1px;background:#e2e3e5;"></div>
<span class="t" style="font-size:6.8px;color:#444;left:900.40px;top:288.04px;">36</span>
<span class="t" style="font-size:6.8px;color:#444;left:947.00px;top:288.04px;">692.80</span>
<span class="t" style="font-size:6.8px;color:#444;left:994.00px;top:288.04px;">-1.4555</span>
<span class="t" style="font-size:6.8px;color:#444;left:1040.80px;top:288.04px;">3.1630</span>
<span class="t" style="font-size:6.8px;color:#444;letter-spacing:-0.087px;left:1087.60px;top:288.04px;">tt_col0.05VS...</span>
<svg style="left:890.4px;top:287.7px" width="6" height="6" viewBox="0 0 6 6"><rect x="0.4" y="0.4" width="5" height="5" fill="#fff" stroke="#6a6a6a" stroke-width="0.7"/><path d="M0.8 2.9h4.2M2.9 0.8v4.2" stroke="#555" stroke-width="0.7"/></svg>
<div style="left:878px;top:296.0px;width:261.9000000000001px;height:1px;background:#e2e3e5;"></div>
<span class="t" style="font-size:6.8px;color:#444;left:900.40px;top:300.39px;">37</span>
<span class="t" style="font-size:6.8px;color:#444;left:947.00px;top:300.39px;">712.62</span>
<span class="t" style="font-size:6.8px;color:#444;left:994.00px;top:300.39px;">-1.3555</span>
<span class="t" style="font-size:6.8px;color:#444;left:1040.80px;top:300.39px;">3.1630</span>
<span class="t" style="font-size:6.8px;color:#444;letter-spacing:-0.087px;left:1087.60px;top:300.39px;">tt_col0.05VS...</span>
<svg style="left:890.4px;top:300.1px" width="6" height="6" viewBox="0 0 6 6"><rect x="0.4" y="0.4" width="5" height="5" fill="#fff" stroke="#6a6a6a" stroke-width="0.7"/><path d="M0.8 2.9h4.2M2.9 0.8v4.2" stroke="#555" stroke-width="0.7"/></svg>
<div style="left:878px;top:308.0px;width:261.9000000000001px;height:1px;background:#e2e3e5;"></div>
<span class="t" style="font-size:6.8px;color:#444;left:900.40px;top:312.74px;">38</span>
<span class="t" style="font-size:6.8px;color:#444;left:947.00px;top:312.74px;">732.40</span>
<span class="t" style="font-size:6.8px;color:#444;left:994.00px;top:312.74px;">-1.2555</span>
<span class="t" style="font-size:6.8px;color:#444;left:1040.80px;top:312.74px;">3.1630</span>
<span class="t" style="font-size:6.8px;color:#444;letter-spacing:-0.087px;left:1087.60px;top:312.74px;">tt_col0.05VS...</span>
<svg style="left:890.4px;top:312.4px" width="6" height="6" viewBox="0 0 6 6"><rect x="0.4" y="0.4" width="5" height="5" fill="#fff" stroke="#6a6a6a" stroke-width="0.7"/><path d="M0.8 2.9h4.2M2.9 0.8v4.2" stroke="#555" stroke-width="0.7"/></svg>
<div style="left:878px;top:320.5px;width:261.9000000000001px;height:1px;background:#e2e3e5;"></div>
<div style="left:888.0px;top:96.8px;width:1px;height:224.25px;background:#e2e3e5;"></div>
<div style="left:897.5px;top:96.8px;width:1px;height:13.5px;background:#e2e3e5;"></div>
<div style="left:944.0px;top:96.8px;width:1px;height:161.69999999999993px;background:#e2e3e5;"></div>
<div style="left:944.0px;top:283.99999999999994px;width:1px;height:37.05000000000007px;background:#e2e3e5;"></div>
<div style="left:991.0px;top:96.8px;width:1px;height:161.69999999999993px;background:#e2e3e5;"></div>
<div style="left:991.0px;top:283.99999999999994px;width:1px;height:37.05000000000007px;background:#e2e3e5;"></div>
<div style="left:1037.5px;top:96.8px;width:1px;height:161.69999999999993px;background:#e2e3e5;"></div>
<div style="left:1037.5px;top:283.99999999999994px;width:1px;height:37.05000000000007px;background:#e2e3e5;"></div>
<div style="left:1084.0px;top:96.8px;width:1px;height:161.69999999999993px;background:#e2e3e5;"></div>
<div style="left:1084.0px;top:283.99999999999994px;width:1px;height:37.05000000000007px;background:#e2e3e5;"></div>
<div style="left:1134.0px;top:96.8px;width:1px;height:149.34999999999997px;background:#e2e3e5;"></div>
<div style="left:1134.0px;top:283.99999999999994px;width:1px;height:37.05000000000007px;background:#e2e3e5;"></div>
<div style="left:944.0px;top:258.49999999999994px;width:1px;height:25.5px;background:#e2e3e5;"></div>
<div style="left:991.0px;top:258.49999999999994px;width:1px;height:25.5px;background:#e2e3e5;"></div>
<div style="left:1037.5px;top:258.49999999999994px;width:1px;height:25.5px;background:#e2e3e5;"></div>
<div style="left:1084.0px;top:258.49999999999994px;width:1px;height:25.5px;background:#e2e3e5;"></div>
<div style="left:1131.0px;top:258.49999999999994px;width:1px;height:25.5px;background:#e2e3e5;"></div>
<div style="left:897.5px;top:258.49999999999994px;width:1px;height:25.5px;background:#e2e3e5;"></div>
<div style="left:1139.9px;top:110.8px;width:9.8px;height:469.2px;background:#f0f0f0;"></div>
<svg style="left:1142px;top:113.6px" width="6" height="4" viewBox="0 0 6 4"><path d="M0.6 3.2l2.4-2.4l2.4 2.4" stroke="#a8a8a8" stroke-width="0.7" fill="none"/></svg>
<svg style="left:1142px;top:572.6px" width="6" height="4" viewBox="0 0 6 4"><path d="M0.6 0.8l2.4 2.4l2.4-2.4" stroke="#a8a8a8" stroke-width="0.7" fill="none"/></svg>
<div style="left:888.1px;top:580px;width:252.10000000000002px;height:9px;background:#f0f0f0;"></div>
<div style="left:898.3px;top:580px;width:119.1px;height:9px;background:#c1c1c1;"></div>
<div style="left:1139.9px;top:580px;width:9.8px;height:9px;background:#f0f0f0;"></div>
<svg style="left:891.4px;top:581.6px" width="4" height="6" viewBox="0 0 4 6"><path d="M3.2 0.6l-2.4 2.4l2.4 2.4" stroke="#555" stroke-width="0.8" fill="none"/></svg>
<svg style="left:1133.2px;top:581.6px" width="4" height="6" viewBox="0 0 4 6"><path d="M0.8 0.6l2.4 2.4l-2.4 2.4" stroke="#555" stroke-width="0.8" fill="none"/></svg>
<div style="left:887.5px;top:580px;width:1px;height:9px;background:#e2e3e5;"></div>
<div style="left:876px;top:593.2px;width:278px;height:13.6px;background:#d6d6d6;"></div>
<div style="left:876px;top:593.2px;width:38.7px;height:13.6px;background:#fff;"></div>
<span class="t" style="font-size:7px;color:#2a7fd0;letter-spacing:-0.125px;left:881.60px;top:596.37px;">Peak List</span>
<span class="t" style="font-size:7px;color:#333;letter-spacing:-0.084px;left:921.50px;top:596.37px;">Phase Plot</span>
<span class="t" style="font-size:7px;color:#333;letter-spacing:-0.006px;left:967.40px;top:596.37px;">Result Plot</span>
<span class="t" style="font-size:7px;color:#333;letter-spacing:-0.046px;left:1013.80px;top:596.37px;">Result Table</span>
<span class="t" style="font-size:7px;color:#333;letter-spacing:-0.021px;left:1064.00px;top:596.37px;">Peak Plot</span>
</div>
<div class="statusbar" style="left:0;top:0">
<div style="left:40px;top:611px;width:1119px;height:16px;background:#1583c9;"></div>
<span class="t" style="font-size:7px;color:#fff;letter-spacing:-0.145px;left:43.10px;top:615.87px;">XRD Measurement</span>
<div style="left:102.4px;top:613.6px;width:1px;height:11px;background:#5aa6da;"></div>
<span class="t" style="font-size:7px;color:#fff;letter-spacing:-0.041px;left:105.60px;top:615.87px;">Not ready (Connected)</span>
<div style="left:191.4px;top:613.6px;width:1px;height:11px;background:#bcdcf0;"></div>
<div style="left:283px;top:613.6px;width:1px;height:11px;background:#bcdcf0;"></div>
<div style="left:194px;top:616.7px;width:86.7px;height:4.3px;background:#fff;"></div>
<div style="left:1109.2px;top:615px;width:28.6px;height:7.8px;background:#fff;"></div>
<span class="t" style="font-size:5.8px;color:#1560b0;font-weight:700;letter-spacing:1.034px;left:1111.25px;top:615.89px;font-style:italic;">Rigaku</span>
<div style="left:1140.4px;top:613.6px;width:1px;height:11px;background:#bcdcf0;"></div>
<svg style="left:1151.8px;top:619.6px" width="7" height="7" viewBox="0 0 7 7"><g fill="#cfe6f6"><rect x="5" y="1" width="1.4" height="1.4"/><rect x="3" y="3" width="1.4" height="1.4"/><rect x="5" y="3" width="1.4" height="1.4"/><rect x="1" y="5" width="1.4" height="1.4"/><rect x="3" y="5" width="1.4" height="1.4"/><rect x="5" y="5" width="1.4" height="1.4"/></g></svg>
</div>
</body></html>
